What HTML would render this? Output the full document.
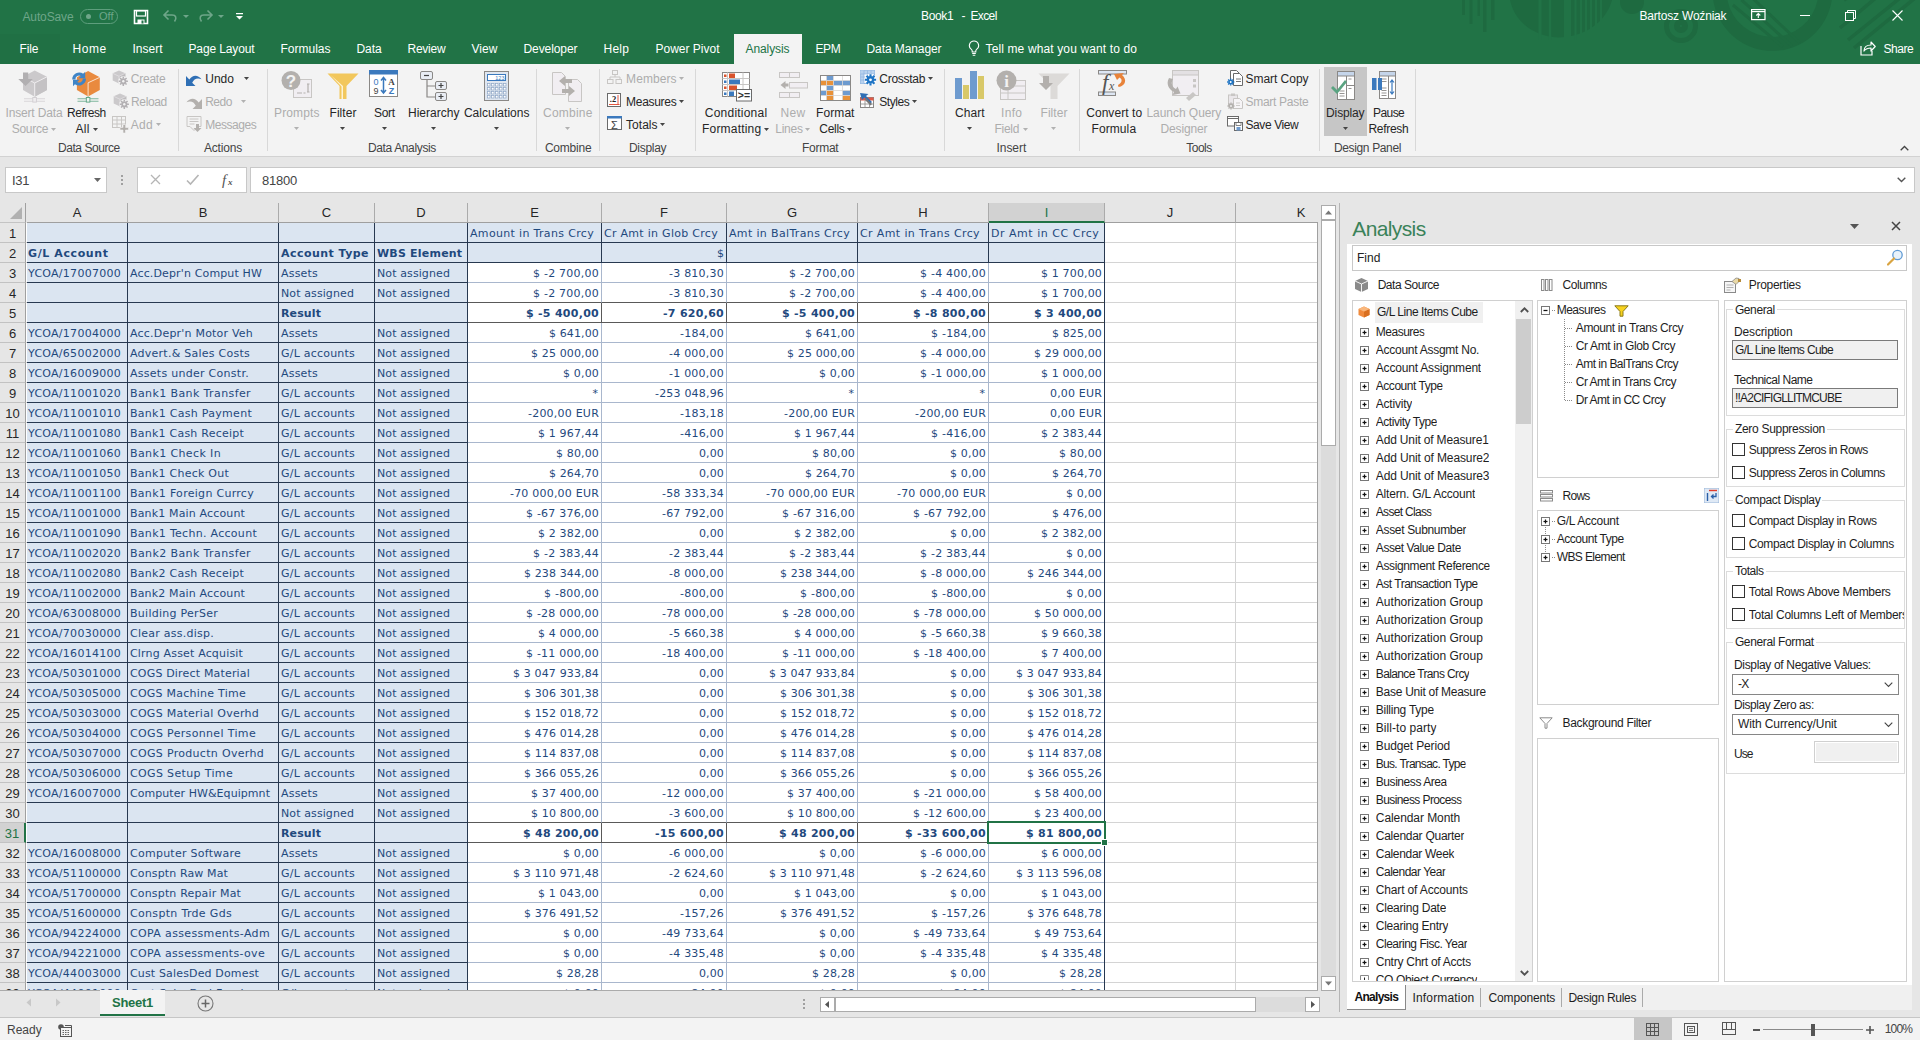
<!DOCTYPE html>
<html lang="en"><head><meta charset="utf-8"><title>Book1 - Excel</title>
<style>

html,body{margin:0;padding:0}
body{width:1920px;height:1040px;overflow:hidden;position:relative;background:#e6e6e6;font-family:"Liberation Sans",sans-serif;font-size:12px;color:#262626}
#greenbg{position:absolute;left:0;top:0;width:1920px;height:64px;background:#217346}


#title{position:absolute;left:0;top:0;width:1920px;height:32px;background:#217346;overflow:visible}
#tabs{position:absolute;left:0;top:32px;width:1920px;height:32px;background:transparent}
#greenbg{position:absolute;left:0;top:0;width:1920px;height:64px;background:#217346}
.t{position:absolute;white-space:nowrap;line-height:16px}
.w{color:#fff}
.dim{color:#6ea689}
.tab{font-size:13px}
#filetab{position:absolute;left:0;top:2px;width:60px;height:30px;background:#207044}
#acttab{position:absolute;left:734px;top:2px;width:68px;height:30px;background:#f3f3f3}
#astoggle{position:absolute;left:80px;top:9px;width:38px;height:15px;box-sizing:border-box;border:1px solid #5e9e7d;border-radius:8px;color:#6ea689;font-size:11px;line-height:13px}
#astoggle i{position:absolute;left:5px;top:4px;width:5px;height:5px;border-radius:3px;background:#6ea689}
#astoggle span{position:absolute;left:18px;top:0}
svg.dd{fill:#444}


#ribbon{position:absolute;left:0;top:64px;width:1920px;height:92px;background:#f3f3f3;border-bottom:1px solid #d2d2d2}
.rc{position:absolute;width:160px;text-align:center;font-size:12px;line-height:16px;color:#262626;white-space:nowrap}
.rl{position:absolute;font-size:12px;line-height:16px;color:#262626;white-space:nowrap}
.dimt{color:#adadad}
.grp{color:#444}
.rsep{position:absolute;top:5px;width:1px;height:82px;background:#d8d8d8}
#dispbtn{position:absolute;left:1324px;top:3px;width:43px;height:69px;background:#c6c6c6}


#fbar{position:absolute;left:0;top:157px;width:1920px;height:46px;background:#e6e6e6}
#namebox{position:absolute;left:5px;top:10px;width:102px;height:26px;box-sizing:border-box;background:#fff;border:1px solid #c8c8c8;font-size:13px;color:#444}
#namebox span{position:absolute;left:6px;top:5px;line-height:16px;letter-spacing:-.3px}
#fdots{position:absolute;left:121px;top:18px;width:3px}
#fdots i{display:block;width:2px;height:2px;background:#a0a0a0;margin-bottom:2px}
#fbtns{position:absolute;left:137px;top:10px;width:110px;height:26px;box-sizing:border-box;background:#fff;border:1px solid #c8c8c8}
#finput{position:absolute;left:250px;top:10px;width:1665px;height:26px;box-sizing:border-box;background:#fff;border:1px solid #c8c8c8;font-size:13px;color:#444}
#finput span{position:absolute;left:11px;top:5px;line-height:16px;letter-spacing:-.2px}
#vscroll{position:absolute;left:1318px;top:203px;width:22px;height:787px;background:#e6e6e6;z-index:20;border-right:1px solid #b5b5b5;box-sizing:border-box}
#vscroll:before{content:"";position:absolute;left:3px;top:17px;width:15px;height:757px;background:#dcdcdc}
.sbtn{position:absolute;left:3px;width:15px;height:15px;background:#fff;border:1px solid #ababab;box-sizing:border-box;overflow:hidden}
.sbtn svg{position:absolute;left:-1px;top:-1px}
#vthumb{position:absolute;left:3px;top:17px;width:15px;height:226px;background:#fff;border:1px solid #ababab;box-sizing:border-box}
#tabbar{position:absolute;left:0;top:990px;width:1340px;height:27px;background:#e6e6e6}
#sheet1{position:absolute;left:100px;top:0;width:65px;height:26px;letter-spacing:-.3px;box-sizing:border-box;background:#f3f3f3;border-bottom:2px solid #217346;color:#217346;font-weight:bold;font-size:13px;text-align:center;line-height:26px}
#hdots{position:absolute;left:803px;top:9px}
#hdots i{display:block;width:2px;height:2px;background:#a0a0a0;margin-bottom:2px}
#hscroll{position:absolute;left:820px;top:7px;width:500px;height:15px;background:#dcdcdc}
.hbtn{position:absolute;top:0;width:15px;height:15px;background:#fff;border:1px solid #ababab;box-sizing:border-box}
#hthumb{position:absolute;left:15px;top:0;width:421px;height:15px;background:#fff;border:1px solid #ababab;box-sizing:border-box}
#status{position:absolute;left:0;top:1017px;width:1920px;height:23px;background:#f3f3f3;border-top:1px solid #c6c6c6;box-sizing:border-box}
#viewsel{position:absolute;left:1634px;top:0;width:38px;height:23px;background:#c6c6c6}


#sheet{position:absolute;left:0;top:203px;width:1318px;height:787px;overflow:hidden;background:#e6e6e6}
#grid{position:absolute;left:26px;top:20px;width:1291px;height:767px;border-right:1px solid #a0a0a0;background-color:#fff;
 background-image:linear-gradient(to bottom,#d4d4d4 1px,transparent 1px);background-size:100% 20px;background-position:0 -1px}
.ch{position:absolute;top:0;height:19px;line-height:20px;text-align:center;font-size:13px;color:#262626;border-right:1px solid #ababab;border-bottom:1px solid #9f9f9f;box-sizing:border-box;height:20px;letter-spacing:0}
.ch.sel{background:#d2d2d2;color:#217346;border-bottom:2px solid #217346;z-index:6}
#grid i{position:absolute;top:0;width:1px;height:100%;background:#d4d4d4}
#iborder{position:absolute;left:1104px;top:20px;width:1px;height:768px;background:#273850;z-index:4}
#corner{position:absolute;left:0;top:0;width:26px;height:20px;box-sizing:border-box;border-right:1px solid #a0a0a0;border-bottom:1px solid #c4c4c4}
#corner:after{content:"";position:absolute;right:3px;bottom:3px;border-left:12px solid transparent;border-bottom:12px solid #b1b1b1}
.rh{position:absolute;left:0;width:26px;height:20px;line-height:22px;text-align:center;font-size:13px;color:#262626;box-sizing:border-box;border-right:1px solid #a0a0a0;border-bottom:1px solid #c2c2c2}
.rh.sel{background:#d2d2d2;color:#217346;border-right:2px solid #217346}
.c{position:absolute;height:20px;box-sizing:border-box;font-family:"DejaVu Sans","Liberation Sans",sans-serif;font-size:11px;color:#1f497d;line-height:19px;white-space:nowrap;overflow:hidden;padding:1px 2px 0 2px;border-right:1px solid;border-bottom:1px solid}
.c.h{background:#dbe5f1;border-color:#273850}
.c.d{background:#fff;border-color:#a9b7cd}
.c.r{text-align:right}
.c.b{font-weight:bold}
.c.res{border-color:#595959}
.c.pre{border-bottom-color:#595959}
.c.last{border-right-color:#273850}
#selbox{position:absolute;box-sizing:border-box;border:2px solid #217346;z-index:5}
#selhandle{position:absolute;width:5px;height:5px;background:#217346;border:1px solid #fff;z-index:6}


#panel{position:absolute;left:1340px;top:203px;width:580px;height:814px;background:#e6e6e6;overflow:hidden}
#pwhite{position:absolute;left:7px;top:41px;width:565px;height:741px;background:#fff}
#ptitle{position:absolute;left:12.3px;top:13px;font-size:21px;line-height:26px;color:#3a8259;letter-spacing:-.62px}
#find{position:absolute;left:12px;top:42px;width:555px;height:26px;box-sizing:border-box;border:1px solid #c8c8c8;background:#fff}
#find span{position:absolute;left:4px;top:4px;font-size:12px;line-height:16px;color:#222}
.pt{position:absolute;font-size:12px;line-height:16px;color:#1e1e1e;white-space:nowrap}
.pm{position:absolute}
.box{position:absolute;box-sizing:border-box;border:1px solid #d0d0d0;background:#fff}
#dsbox{left:12px;top:97px;width:181px;height:682px;overflow:hidden}
#dstrack{position:absolute;right:0;top:0;width:17px;height:100%;background:#f0f0f0}
#dsthumb{position:absolute;right:1px;top:18px;width:15px;height:105px;background:#cdcdcd}
#dshl{position:absolute;left:22px;top:1px;width:108px;height:21px;background:#f0f0f0}
#colbox{left:197px;top:97px;width:182px;height:178px}
#rowbox{left:197px;top:307px;width:182px;height:195px}
#bfbox{left:197px;top:535px;width:182px;height:244px}
#propbox{left:384px;top:97px;width:183px;height:682px}
.dots.h{position:absolute;height:1px;background-image:linear-gradient(to right,#8a8a8a 1px,transparent 1px);background-size:2px 1px}
.dots.v{position:absolute;width:1px;background-image:linear-gradient(to bottom,#8a8a8a 1px,transparent 1px);background-size:1px 2px}
.frame{position:absolute;left:386px;width:179px;box-sizing:border-box;border:1px solid #dcdcdc}
.legend{position:absolute;left:392.9px;height:16px;background:#fff;font-size:12px;line-height:16px;color:#1e1e1e;padding-left:2px;white-space:nowrap;box-sizing:border-box}
.chk{position:absolute;width:13px;height:13px;box-sizing:border-box;border:1px solid #333;background:#fff}
.tb{position:absolute;left:392px;width:166px;height:20px;box-sizing:border-box;border:1px solid #7a7a7a;background:#f0f0f0;font-size:12px;line-height:18px;color:#1e1e1e;white-space:nowrap;overflow:hidden}
.tb span{position:absolute;left:2px;top:0}
.psel{position:absolute;left:392px;width:167px;height:21px;box-sizing:border-box;border:1px solid #868686;background:#fff;font-size:12px;line-height:19px;color:#1e1e1e}
.psel span{position:absolute;left:5px;top:0;white-space:nowrap}
.psel svg{position:absolute;right:5px;top:7px}
#usebox{position:absolute;left:474px;top:538px;width:85px;height:22px;box-sizing:border-box;border:1px solid #d0d0d0;background:#f0f0f0;box-shadow:inset 0 0 0 1px #fff}
#propclip{position:absolute;left:565px;top:300px;width:2px;height:200px;background:#fff;border-right:1px solid #d0d0d0;box-sizing:border-box;display:none}
#ptabs{position:absolute;left:7px;top:782px;width:565px;height:25px;background:#f0f0f0}
#ptact{position:absolute;left:0;top:0;width:59px;height:25px;box-sizing:border-box;background:#fff;border-right:1px solid #888;border-bottom:1px solid #888;font-weight:bold;font-size:12px;line-height:25px;color:#111}
#ptact span{position:absolute;left:7.500px;top:0}
.ptab{position:absolute;top:5px;font-size:12px;line-height:16px;color:#1e1e1e;white-space:nowrap}
.ptsep{position:absolute;top:3px;width:1px;height:19px;background:#aaa}

</style></head><body>
<div id="greenbg"></div>
<div id="title">
<svg id="deco" width="480" height="64" viewBox="0 0 480 64" style="position:absolute;left:1440px;top:0">
<g fill="#1e6a40">
<rect x="22" y="0" width="3" height="15"/><rect x="29.500" y="0" width="3" height="24"/><rect x="37.500" y="0" width="2.500" height="16"/><rect x="43" y="0" width="3.500" height="32"/><rect x="51" y="0" width="3.500" height="20"/>
<path d="M70 0 C74 20 92 36 118 37.500 C145 37 166 22 172 0 Z"/>
<circle cx="192" cy="2" r="12"/>
<path d="M273.200 0 A60 60 0 0 0 391.800 0 L377.600 0 A46 46 0 0 1 287.400 0 Z" transform="translate(0,0)"/>
</g>
<g stroke="#217346" fill="none">
<path d="M100 0v40" stroke-width="3"/><path d="M110 0v40" stroke-width="2.500"/><path d="M127.500 0v40" stroke-width="7"/><path d="M135.500 0v40M141 0v40M146 0v40M151 0v40M156 0v40M161 0v40" stroke-width="2"/>
</g>
<g fill="none" stroke="#1e6a40">
<circle cx="241" cy="26" r="14.500" stroke-width="5"/>
<circle cx="241" cy="26" r="4" stroke-width="6"/>
<path d="M290 20 L352 40 M296 12 L360 36 M300 4 L366 30" stroke-width="3" transform="rotate(22 330 20)"/>
<path d="M404 0 L436 -20 M408 40 L470 -10 M414 48 L480 -6 M400 28 L450 -14" stroke-width="3.500"/>
</g>
</svg>
<div class="t dim" style="left:22.5px;top:9px;font-size:12px;letter-spacing:-0.138px;">AutoSave</div>
<div id="astoggle"><i></i><span>Off</span></div>
<svg style="position:absolute;left:133px;top:9px" width="16" height="16" viewBox="0 0 16 16"><path d="M1.5 1.5h13v13h-13z" fill="none" stroke="#fff" stroke-width="1.6"/><rect x="3.5" y="2" width="9" height="5" fill="#217346" stroke="#fff" stroke-width="1.2"/><rect x="4.5" y="10.5" width="7" height="4" fill="#fff"/><rect x="8.5" y="11.5" width="2" height="3" fill="#217346"/></svg>
<svg style="position:absolute;left:162px;top:9px" width="18" height="15" viewBox="0 0 18 15"><path d="M6.5 1.5 L2 6 L6.5 10.5 M2 6 H10 C14 6 15 9 12.5 12.5" fill="none" stroke="#6ea689" stroke-width="1.6"/></svg>
<svg style="position:absolute;left:183px;top:15px" width="6" height="3" viewBox="0 0 6 3"><path d="M0 0h6L3 3z" fill="#6ea689"/></svg>
<svg style="position:absolute;left:196px;top:9px" width="18" height="15" viewBox="0 0 18 15"><path d="M11.5 1.5 L16 6 L11.5 10.5 M16 6 H8 C4 6 3 9 5.5 12.5" fill="none" stroke="#6ea689" stroke-width="1.6"/></svg>
<svg style="position:absolute;left:218px;top:15px" width="6" height="3" viewBox="0 0 6 3"><path d="M0 0h6L3 3z" fill="#6ea689"/></svg>
<svg style="position:absolute;left:236px;top:13px" width="7" height="7" viewBox="0 0 7 7"><path d="M0 0h7v1.2H0zM0 3h7L3.5 6.5z" fill="#fff"/></svg>
<div class="t w" style="left:921.0px;top:8px;font-size:12px;letter-spacing:-0.339px;">Book1</div>
<div class="t w" style="left:961.5px;top:8px;font-size:12px;letter-spacing:0.0px;">-</div>
<div class="t w" style="left:970.5px;top:8px;font-size:12px;letter-spacing:-0.632px;">Excel</div>
<div class="t w" style="left:1639.5px;top:8px;font-size:12px;letter-spacing:-0.194px;">Bartosz Woźniak</div>
<svg style="position:absolute;left:1751px;top:9px" width="15" height="12" viewBox="0 0 15 12"><rect x=".6" y=".6" width="13.4" height="10" fill="none" stroke="#fff" stroke-width="1.2"/><path d="M.6 2.6h13.4" stroke="#fff" stroke-width="1.2"/><path d="M7.3 9V5M5.3 6.5l2-2 2 2" stroke="#fff" fill="none" stroke-width="1.1"/></svg>
<div style="position:absolute;left:1800px;top:15px;width:10px;height:1px;background:#fff"></div>
<svg style="position:absolute;left:1845px;top:10px" width="11" height="11" viewBox="0 0 11 11"><rect x=".5" y="2.5" width="8" height="8" fill="none" stroke="#fff"/><path d="M2.5 2.5v-2h8v8h-2" fill="none" stroke="#fff"/></svg>
<svg style="position:absolute;left:1892px;top:10px" width="11" height="11" viewBox="0 0 11 11"><path d="M.5.5l10 10M10.500.5l-10 10" stroke="#fff" stroke-width="1.1"/></svg>
</div>
<div id="tabs">
<div id="filetab"></div><div id="acttab"></div>
<div class="t w" style="left:19.5px;top:9px;font-size:12px;letter-spacing:-0.096px;">File</div>
<div class="t w" style="left:72.5px;top:9px;font-size:12px;letter-spacing:0.569px;">Home</div>
<div class="t w" style="left:132.5px;top:9px;font-size:12px;letter-spacing:-0.002px;">Insert</div>
<div class="t w" style="left:188.5px;top:9px;font-size:12px;letter-spacing:-0.132px;">Page Layout</div>
<div class="t w" style="left:280.5px;top:9px;font-size:12px;letter-spacing:-0.001px;">Formulas</div>
<div class="t w" style="left:356.5px;top:9px;font-size:12px;letter-spacing:-0.099px;">Data</div>
<div class="t w" style="left:407.5px;top:9px;font-size:12px;letter-spacing:-0.245px;">Review</div>
<div class="t w" style="left:471.5px;top:9px;font-size:12px;letter-spacing:0.059px;">View</div>
<div class="t w" style="left:523.5px;top:9px;font-size:12px;letter-spacing:-0.082px;">Developer</div>
<div class="t w" style="left:603.5px;top:9px;font-size:12px;letter-spacing:0.234px;">Help</div>
<div class="t w" style="left:655.5px;top:9px;font-size:12px;letter-spacing:-0.002px;">Power Pivot</div>
<div class="t w" style="left:815.5px;top:9px;font-size:12px;letter-spacing:-0.402px;">EPM</div>
<div class="t w" style="left:866.5px;top:9px;font-size:12px;letter-spacing:-0.091px;">Data Manager</div>
<div class="t " style="left:745.5px;top:9px;font-size:12px;letter-spacing:-0.091px;color:#217346">Analysis</div>
<svg style="position:absolute;left:968px;top:8px" width="12" height="17" viewBox="0 0 12 17"><path d="M6 1a4.6 4.6 0 0 0-2.6 8.400c.5.400.8 1 .8 1.600V12h3.600v-1c0-.6.300-1.200.8-1.600A4.600 4.600 0 0 0 6 1z" fill="none" stroke="#fff" stroke-width="1.100"/><path d="M4.200 13.500h3.600M4.700 15.200h2.600" stroke="#fff" stroke-width="1.100"/></svg>
<div class="t w" style="left:985.5px;top:9px;font-size:12px;letter-spacing:0.129px;">Tell me what you want to do</div>
<svg style="position:absolute;left:1860px;top:8px" width="16" height="16" viewBox="0 0 16 16"><path d="M1 6v9h11v-4" fill="none" stroke="#fff" stroke-width="1.2"/><path d="M4 11c0-4 3-6 7-6V2l4.200 4.500L11 11V8c-3 0-5 .5-7 3z" fill="none" stroke="#fff" stroke-width="1.200" stroke-linejoin="round"/></svg>
<div class="t w" style="left:1883.5px;top:9px;font-size:12px;letter-spacing:-0.449px;">Share</div>
</div>
<div id="ribbon">
<svg style="position:absolute;left:17px;top:6px" width="32" height="34" viewBox="0 0 32 34"><path d="M17.700 .5L30 6.800V20.100L17.700 26.800 6 20.100V6.800Z" fill="#cbc9cb"/><path d="M17.700 13L30 6.800V20.100L17.700 26.800Z" fill="#c4c2c4"/><path d="M17.700 13V26.800M17.700 13L30 6.800M17.700 13L12 10" stroke="#efedef" stroke-width="1" fill="none"/><path d="M6 2.500h5.200v6.500h4.600L8.500 16 1.300 9H6z" fill="#b1afb1"/><path d="M17.700 26.800v2" stroke="#cbc9cb" stroke-width="1.200"/><path d="M7 28.800h21M7 31.200h21" stroke="#d9d6d9" stroke-width="1.100"/><rect x="15.800" y="27.500" width="3.600" height="4.600" fill="#efedef" stroke="#d0cdd0" stroke-width=".9"/></svg>
<div class="rl dimt" style="left:5.5px;top:41px;letter-spacing:-0.161px">Insert Data</div>
<div class="rl dimt" style="left:11.7px;top:57px;letter-spacing:-0.259px">Source</div>
<svg style="position:absolute;left:51px;top:64px" width="5" height="3" viewBox="0 0 5 3"><path d="M0 0h5L2.500 3z" fill="#b1b1b1"/></svg>
<svg style="position:absolute;left:70px;top:6px" width="32" height="34" viewBox="0 0 32 34"><path d="M18.100 1L29.800 7.300V20L18.100 26.500 6.900 20V7.300Z" fill="#e98a3e"/><path d="M18.100 12.800V26.500M18.100 12.800L29.800 7.300" stroke="#fbe3cf" stroke-width="1" fill="none"/><path d="M2.200 9.500A7 7 0 0 1 13.300 3.800L15.200 1.800V8.300H8.700L10.900 6A3.700 3.700 0 0 0 5.400 9.500Z" fill="#3f84c6"/><path d="M16 8.500A7 7 0 0 1 4.900 14.200L3 16.200V9.700h6.500L7.300 12A3.700 3.700 0 0 0 12.800 8.500Z" fill="#3f84c6"/><path d="M18.100 26.500v2" stroke="#5aa381" stroke-width="1.200"/><path d="M7.500 28.800h21M7.500 31.200h21" stroke="#7fb69d" stroke-width="1.100"/><rect x="16.300" y="27.500" width="3.600" height="4.600" fill="#eef6f1" stroke="#5aa381" stroke-width=".9"/></svg>
<div class="rl " style="left:67.0px;top:41px;letter-spacing:-0.48px">Refresh</div>
<div class="rl " style="left:75.5px;top:57px;letter-spacing:0.266px">All</div>
<svg style="position:absolute;left:93px;top:64px" width="5" height="3" viewBox="0 0 5 3"><path d="M0 0h5L2.500 3z" fill="#444"/></svg>
<svg style="position:absolute;left:112px;top:6px" width="17" height="17" viewBox="0 0 17 17"><path d="M7 .5l6.300 2.800v7.200L7 13.500.7 10.500V3.300z" fill="#cbc9cb"/><path d="M7 6.300l6.300-3v7.200L7 13.500z" fill="#bdbbbd"/><path d="M7 6.300V13.500M7 6.300L.7 3.300M7 6.300l6.300-3" stroke="#e6e4e6" stroke-width=".7" fill="none"/><circle cx="11.300" cy="11.300" r="5" fill="#f3f3f3"/><circle cx="11.3" cy="11.3" r="3.1" fill="#b3b0b3"/><path d="M14.10 11.30L15.90 11.30M13.28 13.28L14.55 14.55M11.30 14.10L11.30 15.90M9.32 13.28L8.05 14.55M8.50 11.30L6.70 11.30M9.32 9.32L8.05 8.05M11.30 8.50L11.30 6.70M13.28 9.32L14.55 8.05" stroke="#b3b0b3" stroke-width="1.5"/><circle cx="11.3" cy="11.3" r="1.18" fill="#f3f3f3"/></svg>
<div class="rl dimt" style="left:130.8px;top:7px;letter-spacing:-0.24px">Create</div>
<svg style="position:absolute;left:113px;top:29px" width="17" height="17" viewBox="0 0 17 17"><path d="M7 .5l6.300 2.800v7.200L7 13.500.7 10.500V3.300z" fill="#cbc9cb"/><path d="M7 6.300l6.300-3v7.200L7 13.500z" fill="#bdbbbd"/><path d="M7 6.300V13.500M7 6.300L.7 3.300M7 6.300l6.300-3" stroke="#e6e4e6" stroke-width=".7" fill="none"/><circle cx="11.300" cy="11.300" r="5" fill="#f3f3f3"/><circle cx="11.3" cy="11.3" r="3.1" fill="#b3b0b3"/><path d="M14.10 11.30L15.90 11.30M13.28 13.28L14.55 14.55M11.30 14.10L11.30 15.90M9.32 13.28L8.05 14.55M8.50 11.30L6.70 11.30M9.32 9.32L8.05 8.05M11.30 8.50L11.30 6.70M13.28 9.32L14.55 8.05" stroke="#b3b0b3" stroke-width="1.5"/><circle cx="11.3" cy="11.3" r="1.18" fill="#f3f3f3"/></svg>
<div class="rl dimt" style="left:131.0px;top:30px;letter-spacing:-0.35px">Reload</div>
<svg style="position:absolute;left:112px;top:52px" width="17" height="18" viewBox="0 0 17 18"><rect x=".5" y=".5" width="13" height="11" fill="#f3f3f3" stroke="#c8c6c4"/><path d="M.5 4h13M.5 8h13M5 .5v11M9.500 .5v11" stroke="#c8c6c4"/><path d="M8 11.500h3v-3h2.500v3h3v2.500h-3v3H11v-3H8z" fill="#b3b0ad" stroke="#f3f3f3" stroke-width=".6"/></svg>
<div class="rl dimt" style="left:130.8px;top:53px;letter-spacing:0.259px">Add</div>
<svg style="position:absolute;left:156px;top:59px" width="5" height="3" viewBox="0 0 5 3"><path d="M0 0h5L2.500 3z" fill="#b1b1b1"/></svg>
<div class="rl grp" style="left:58.0px;top:76px;letter-spacing:-0.457px">Data Source</div>
<div class="rsep" style="left:178px"></div>
<svg style="position:absolute;left:185px;top:8px" width="17" height="16" viewBox="0 0 17 16"><path d="M1 4v10h9.500L7.200 10.800C9 6.500 12.500 5.500 16.500 7.200 13 2.500 7.500 2.500 4.300 7.500z" fill="#2f6fb5"/></svg>
<div class="rl " style="left:205.2px;top:7px;letter-spacing:0.032px">Undo</div>
<svg style="position:absolute;left:244px;top:13px" width="5" height="3" viewBox="0 0 5 3"><path d="M0 0h5L2.500 3z" fill="#444"/></svg>
<svg style="position:absolute;left:186px;top:30px" width="17" height="16" viewBox="0 0 17 16"><path d="M16 5v10H6.500l3.300-3.200C8 7.500 4.500 6.500.5 8.200 4 3.500 9.500 3.500 12.700 8.500z" fill="#b3b0ad"/></svg>
<div class="rl dimt" style="left:205.2px;top:30px;letter-spacing:-0.511px">Redo</div>
<svg style="position:absolute;left:241px;top:36px" width="5" height="3" viewBox="0 0 5 3"><path d="M0 0h5L2.500 3z" fill="#b1b1b1"/></svg>
<svg style="position:absolute;left:186px;top:52px" width="17" height="17" viewBox="0 0 17 17"><path d="M1 .5h14v10l-3 0-4 4-4-4-3 0z" fill="#f3f3f3" stroke="#c8c6c4"/><path d="M3.500 3h9M3.500 5.500h9M3.500 8h5" stroke="#c8c6c4"/><path d="M10 8h3v4h2.500l-4 4-4-4H10z" fill="#b3b0ad"/></svg>
<div class="rl dimt" style="left:205.2px;top:53px;letter-spacing:-0.452px">Messages</div>
<div class="rl grp" style="left:203.9px;top:76px;letter-spacing:-0.162px">Actions</div>
<div class="rsep" style="left:267px"></div>
<svg style="position:absolute;left:281px;top:6px" width="32" height="30" viewBox="0 0 32 30"><rect x="12.500" y="9.500" width="18" height="18" fill="#f1eef2" stroke="#c8c6c4"/><path d="M16 23h5M22.500 23h2M27 14v8M26 14h2.500M26 22h2.500" stroke="#b3b0ad" stroke-width="1.200"/><circle cx="10" cy="10.500" r="9.500" fill="#b3b0ad"/><text x="10" y="16.500" font-family="Liberation Sans,sans-serif" font-weight="bold" font-size="17" fill="#f3f3f3" text-anchor="middle">?</text></svg>
<div class="rl dimt" style="left:274.1px;top:41px;letter-spacing:0.111px">Prompts</div>
<svg style="position:absolute;left:294px;top:63px" width="5" height="3" viewBox="0 0 5 3"><path d="M0 0h5L2.500 3z" fill="#b1b1b1"/></svg>
<svg style="position:absolute;left:327px;top:6px" width="32" height="30" viewBox="0 0 32 30"><path d="M.5 3.500h31L19.500 16v13h-7V16z" fill="#f2c75c"/><path d="M3.500 5l11 11.500V29h1.500V16z" fill="#fdf3d5"/></svg>
<div class="rl " style="left:329.5px;top:41px;letter-spacing:0.061px">Filter</div>
<svg style="position:absolute;left:340px;top:63px" width="5" height="3" viewBox="0 0 5 3"><path d="M0 0h5L2.500 3z" fill="#444"/></svg>
<svg style="position:absolute;left:369px;top:6px" width="29" height="27" viewBox="0 0 29 27"><rect x=".5" y=".5" width="28" height="26" fill="#fff" stroke="#8a8886"/><rect x="0" y="0" width="29" height="4.500" fill="#3b79bd"/><text x="7" y="14.500" font-family="Liberation Sans,sans-serif" font-size="9" fill="#3b79bd" text-anchor="middle">0</text><text x="7" y="24" font-family="Liberation Sans,sans-serif" font-size="9" fill="#444" text-anchor="middle">9</text><text x="22.500" y="14.500" font-family="Liberation Serif,serif" font-weight="bold" font-size="9" fill="#444" text-anchor="middle">A</text><text x="22.500" y="24" font-family="Liberation Sans,sans-serif" font-weight="bold" font-size="9" fill="#3b79bd" text-anchor="middle">Z</text><path d="M14.500 8v14M12 10.500l2.500-3 2.500 3M12 20l2.500 3 2.500-3" stroke="#3b79bd" stroke-width="1.500" fill="none"/></svg>
<div class="rl " style="left:373.9px;top:41px;letter-spacing:-0.231px">Sort</div>
<svg style="position:absolute;left:382px;top:63px" width="5" height="3" viewBox="0 0 5 3"><path d="M0 0h5L2.500 3z" fill="#444"/></svg>
<svg style="position:absolute;left:420px;top:6px" width="28" height="32" viewBox="0 0 28 32"><path d="M7 9v18h10M7 16h10" fill="none" stroke="#8a8886" stroke-width="1.200"/><rect x=".5" y="1.500" width="12" height="8" rx="1.500" fill="#e9edf4" stroke="#8a8886"/><path d="M4 5.500h5" stroke="#444" stroke-width="1.200"/><rect x="15.500" y="11.500" width="11" height="8" rx="1.500" fill="#e9edf4" stroke="#8a8886"/><path d="M18.500 15.500h5M21 13v5" stroke="#444" stroke-width="1.200"/><rect x="15.500" y="22.500" width="11" height="8" rx="1.500" fill="#e9edf4" stroke="#8a8886"/><path d="M18.500 26.500h5M21 24v5" stroke="#444" stroke-width="1.200"/></svg>
<div class="rl " style="left:408.0px;top:41px;letter-spacing:0.018px">Hierarchy</div>
<svg style="position:absolute;left:431px;top:63px" width="5" height="3" viewBox="0 0 5 3"><path d="M0 0h5L2.500 3z" fill="#444"/></svg>
<svg style="position:absolute;left:484px;top:7px" width="25" height="30" viewBox="0 0 25 30"><rect x=".5" y=".5" width="24" height="29" fill="#dfe6f0" stroke="#8a8886"/><rect x="3.500" y="3.500" width="18" height="6" fill="#fff" stroke="#3b79bd"/><text x="20.500" y="9" font-family="Liberation Sans,sans-serif" font-size="5.500" fill="#3b79bd" text-anchor="end">123</text><rect x="3.5" y="12.5" width="2.500" height="2.500" fill="#fff" stroke="#8fa6c6" stroke-width=".7"/><rect x="3.5" y="16.5" width="2.500" height="2.500" fill="#fff" stroke="#8fa6c6" stroke-width=".7"/><rect x="3.5" y="20.5" width="2.500" height="2.500" fill="#fff" stroke="#8fa6c6" stroke-width=".7"/><rect x="3.5" y="24.5" width="2.500" height="2.500" fill="#fff" stroke="#8fa6c6" stroke-width=".7"/><rect x="7.5" y="12.5" width="2.500" height="2.500" fill="#fff" stroke="#8fa6c6" stroke-width=".7"/><rect x="7.5" y="16.5" width="2.500" height="2.500" fill="#fff" stroke="#8fa6c6" stroke-width=".7"/><rect x="7.5" y="20.5" width="2.500" height="2.500" fill="#fff" stroke="#8fa6c6" stroke-width=".7"/><rect x="7.5" y="24.5" width="2.500" height="2.500" fill="#fff" stroke="#8fa6c6" stroke-width=".7"/><rect x="11.5" y="12.5" width="2.500" height="2.500" fill="#fff" stroke="#8fa6c6" stroke-width=".7"/><rect x="11.5" y="16.5" width="2.500" height="2.500" fill="#fff" stroke="#8fa6c6" stroke-width=".7"/><rect x="11.5" y="20.5" width="2.500" height="2.500" fill="#fff" stroke="#8fa6c6" stroke-width=".7"/><rect x="11.5" y="24.5" width="2.500" height="2.500" fill="#fff" stroke="#8fa6c6" stroke-width=".7"/><rect x="15.5" y="12.5" width="2.500" height="2.500" fill="#fff" stroke="#8fa6c6" stroke-width=".7"/><rect x="15.5" y="16.5" width="2.500" height="2.500" fill="#fff" stroke="#8fa6c6" stroke-width=".7"/><rect x="15.5" y="20.5" width="2.500" height="2.500" fill="#fff" stroke="#8fa6c6" stroke-width=".7"/><rect x="15.5" y="24.5" width="2.500" height="2.500" fill="#fff" stroke="#8fa6c6" stroke-width=".7"/><rect x="19.5" y="12.5" width="2.500" height="2.500" fill="#fff" stroke="#8fa6c6" stroke-width=".7"/><rect x="19.5" y="16.5" width="2.500" height="2.500" fill="#fff" stroke="#8fa6c6" stroke-width=".7"/><rect x="19.5" y="20.5" width="2.500" height="2.500" fill="#fff" stroke="#8fa6c6" stroke-width=".7"/><rect x="19.5" y="24.5" width="2.500" height="2.500" fill="#fff" stroke="#8fa6c6" stroke-width=".7"/></svg>
<div class="rl " style="left:463.9px;top:41px;letter-spacing:0.02px">Calculations</div>
<svg style="position:absolute;left:494px;top:63px" width="5" height="3" viewBox="0 0 5 3"><path d="M0 0h5L2.500 3z" fill="#444"/></svg>
<div class="rl grp" style="left:367.9px;top:76px;letter-spacing:-0.352px">Data Analysis</div>
<div class="rsep" style="left:536px"></div>
<svg style="position:absolute;left:551px;top:7px" width="33" height="32" viewBox="0 0 33 32"><path d="M1.500 1.500h9l4 4v18h-13z" fill="#f1eef2" stroke="#c8c6c4"/><path d="M17.500 8.500h9l4 4v18h-13z" fill="#f1eef2" stroke="#c8c6c4"/><path d="M8 10l6-5v3h7v4h-7v3z" fill="#b3b0ad"/><path d="M24 20l-6 5v-3h-7v-4h7v-3z" fill="#b3b0ad"/></svg>
<div class="rl dimt" style="left:543.0px;top:41px;letter-spacing:0.227px">Combine</div>
<svg style="position:absolute;left:565px;top:63px" width="5" height="3" viewBox="0 0 5 3"><path d="M0 0h5L2.500 3z" fill="#b1b1b1"/></svg>
<div class="rl grp" style="left:544.9px;top:76px;letter-spacing:-0.219px">Combine</div>
<div class="rsep" style="left:599px"></div>
<svg style="position:absolute;left:607px;top:6px" width="15" height="14" viewBox="0 0 15 14"><g fill="#f3f3f3" stroke="#c8c6c4"><rect x="5.500" y=".5" width="5" height="4"/><rect x=".5" y="9.500" width="5.500" height="4"/><rect x="9" y="9.500" width="5.500" height="4"/></g><path d="M8 4.500v2.500M3 9.500V7h10v2.500" fill="none" stroke="#c8c6c4"/></svg>
<div class="rl dimt" style="left:626.1px;top:7px;letter-spacing:0.06px">Members</div>
<svg style="position:absolute;left:679px;top:13px" width="5" height="3" viewBox="0 0 5 3"><path d="M0 0h5L2.500 3z" fill="#b1b1b1"/></svg>
<svg style="position:absolute;left:607px;top:29px" width="14" height="14" viewBox="0 0 14 14"><rect x=".5" y=".5" width="13" height="13" fill="#fff" stroke="#6a6a6a"/><text x="6" y="9" font-family="Liberation Serif,serif" font-weight="bold" font-size="8.500" fill="#222" text-anchor="middle">.2</text><path d="M2 11.500h10.500M11 2v9.500" stroke="#e0452c" stroke-width=".9"/></svg>
<div class="rl " style="left:626.1px;top:30px;letter-spacing:-0.305px">Measures</div>
<svg style="position:absolute;left:679px;top:36px" width="5" height="3" viewBox="0 0 5 3"><path d="M0 0h5L2.500 3z" fill="#444"/></svg>
<svg style="position:absolute;left:607px;top:52px" width="15" height="14" viewBox="0 0 15 14"><rect x=".5" y=".5" width="14" height="13" fill="#fff" stroke="#6a6a6a"/><rect x="0" y="0" width="15" height="2.500" fill="#3b79bd"/><text x="7.500" y="12.500" font-family="Liberation Sans,sans-serif" font-size="11" fill="#444" text-anchor="middle">Σ</text></svg>
<div class="rl " style="left:626.1px;top:53px;letter-spacing:0.009px">Totals</div>
<svg style="position:absolute;left:660px;top:59px" width="5" height="3" viewBox="0 0 5 3"><path d="M0 0h5L2.500 3z" fill="#444"/></svg>
<div class="rl grp" style="left:628.9px;top:76px;letter-spacing:-0.269px">Display</div>
<div class="rsep" style="left:695px"></div>
<svg style="position:absolute;left:722px;top:8px" width="31" height="30" viewBox="0 0 31 30"><rect x=".5" y=".5" width="27" height="24" fill="#fff" stroke="#8a8886"/><path d="M.5 6.500h27M.5 12.500h27M.5 18.500h27M5.500 .5v24M21 .5v24" stroke="#c8c6c4"/><rect x="2" y="2.500" width="2.500" height="2.500" fill="#d9532c"/><rect x="2" y="8.500" width="2.500" height="2.500" fill="#3b79bd"/><rect x="2" y="14.500" width="2.500" height="2.500" fill="#d9532c"/><rect x="2" y="20.500" width="2.500" height="2.500" fill="#3b79bd"/><rect x="7" y="1.500" width="6" height="4.500" fill="#d9532c"/><rect x="7" y="7.500" width="11" height="4.500" fill="#3b79bd"/><rect x="7" y="13.500" width="8" height="4.500" fill="#d9532c"/><rect x="7" y="19.500" width="5" height="4.500" fill="#3b79bd"/><rect x="14.500" y="17.500" width="15" height="11.500" fill="#fff" stroke="#6a6a6a"/><text x="22" y="27" font-family="Liberation Sans,sans-serif" font-weight="bold" font-size="10.500" fill="#333" text-anchor="middle">&gt;=</text></svg>
<div class="rl " style="left:704.8px;top:41px;letter-spacing:0.225px">Conditional</div>
<div class="rl " style="left:702.0px;top:57px;letter-spacing:0.195px">Formatting</div>
<svg style="position:absolute;left:764px;top:64px" width="5" height="3" viewBox="0 0 5 3"><path d="M0 0h5L2.500 3z" fill="#444"/></svg>
<svg style="position:absolute;left:779px;top:8px" width="30" height="27" viewBox="0 0 30 27"><g fill="#f1eef2" stroke="#c8c6c4"><rect x=".5" y=".5" width="10" height="5"/><rect x="10.500" y=".5" width="10" height="5"/><rect x="10.500" y="10.500" width="18" height="5.500"/><rect x=".5" y="20.500" width="10" height="5"/><rect x="10.500" y="20.500" width="10" height="5"/></g><path d="M1.500 13l5-4v2.500h3v3h-3V17z" fill="#b3b0ad"/></svg>
<div class="rl dimt" style="left:780.5px;top:41px;letter-spacing:0.318px">New</div>
<div class="rl dimt" style="left:775.2px;top:57px;letter-spacing:-0.219px">Lines</div>
<svg style="position:absolute;left:805px;top:64px" width="5" height="3" viewBox="0 0 5 3"><path d="M0 0h5L2.500 3z" fill="#b1b1b1"/></svg>
<svg style="position:absolute;left:820px;top:11px" width="31" height="26" viewBox="0 0 31 26"><rect x=".5" y=".5" width="30" height="25" fill="#fff" stroke="#8a8886"/><rect x="0.5" y="5.5" width="6" height="5" fill="#e8923a"/><rect x="6.5" y="5.5" width="7" height="5" fill="#e8923a"/><rect x="6.5" y="0.5" width="7" height="5" fill="#6e9bcf"/><rect x="13.5" y="5.5" width="9" height="5" fill="#6e9bcf"/><rect x="22.5" y="5.5" width="8" height="5" fill="#6e9bcf"/><rect x="6.5" y="10.5" width="7" height="5" fill="#6e9bcf"/><rect x="0.5" y="15.5" width="6" height="5" fill="#6e9bcf"/><rect x="6.5" y="15.5" width="7" height="5" fill="#e8923a"/><rect x="22.5" y="15.5" width="8" height="5" fill="#6e9bcf"/><rect x="6.5" y="20.5" width="7" height="5" fill="#e8923a"/><rect x="22.5" y="20.5" width="8" height="5" fill="#e8923a"/><rect x="13.5" y="0.5" width="9" height="5" fill="#fff"/><path d="M.5 5.500h30M.5 10.500h30M.5 15.500h30M.5 20.500h30M6.500 .5v25M13.500 .5v25M22.500 .5v25" stroke="#d8d6d4" stroke-width=".8"/><rect x=".5" y=".5" width="30" height="25" fill="none" stroke="#8a8886"/></svg>
<div class="rl " style="left:816.1px;top:41px;letter-spacing:0.072px">Format</div>
<div class="rl " style="left:819.3px;top:57px;letter-spacing:-0.283px">Cells</div>
<svg style="position:absolute;left:847px;top:64px" width="5" height="3" viewBox="0 0 5 3"><path d="M0 0h5L2.500 3z" fill="#444"/></svg>
<svg style="position:absolute;left:860px;top:6px" width="17" height="17" viewBox="0 0 17 17"><rect x=".5" y=".5" width="14" height="13" fill="#fff" stroke="#8fb4e0"/><rect x=".5" y=".5" width="14" height="3.500" fill="#b8d2ee"/><rect x=".5" y=".5" width="3.500" height="13" fill="#b8d2ee"/><path d="M4 .5v13M7.500 .5v13M11 .5v13M.5 4h14M.5 7h14M.5 10h14" stroke="#8fb4e0" stroke-width=".7"/><circle cx="10.500" cy="9.800" r="6" fill="#fff" opacity=".85"/><circle cx="10.5" cy="9.8" r="3.7" fill="#1e74c4"/><path d="M13.90 9.80L16.10 9.80M12.90 12.20L14.46 13.76M10.50 13.20L10.50 15.40M8.10 12.20L6.54 13.76M7.10 9.80L4.90 9.80M8.10 7.40L6.54 5.84M10.50 6.40L10.50 4.20M12.90 7.40L14.46 5.84" stroke="#1e74c4" stroke-width="2.1"/><circle cx="10.5" cy="9.8" r="1.41" fill="#fff"/></svg>
<div class="rl " style="left:879.3px;top:7px;letter-spacing:-0.269px">Crosstab</div>
<svg style="position:absolute;left:928px;top:13px" width="5" height="3" viewBox="0 0 5 3"><path d="M0 0h5L2.500 3z" fill="#444"/></svg>
<svg style="position:absolute;left:860px;top:29px" width="15" height="15" viewBox="0 0 15 15"><rect x=".5" y="4.500" width="13" height="10" fill="#fff" stroke="#8a8886"/><rect x=".5" y="4.500" width="13" height="3" fill="#e05a47"/><path d="M.5 11h13M5 7.500v7M9.500 7.500v7" stroke="#8a8886" stroke-width=".8"/><path d="M0 0l2 7 2.500-2.500 6 6 1.500-1.500-6-6L8.500 1z" fill="#2f6fb5"/><path d="M6 5l6 6-1.500 1.500-6-6z" fill="#777"/></svg>
<div class="rl " style="left:879.3px;top:30px;letter-spacing:-0.451px">Styles</div>
<svg style="position:absolute;left:912px;top:36px" width="5" height="3" viewBox="0 0 5 3"><path d="M0 0h5L2.500 3z" fill="#444"/></svg>
<div class="rl grp" style="left:802.0px;top:76px;letter-spacing:-0.273px">Format</div>
<div class="rsep" style="left:944px"></div>
<svg style="position:absolute;left:955px;top:6px" width="29" height="30" viewBox="0 0 29 30"><rect x="0" y="8" width="7" height="21" fill="#6e9bcf"/><rect x="8" y="15" width="6" height="14" fill="#d8c868"/><rect x="15" y="1" width="7" height="28" fill="#6e9bcf"/><rect x="23" y="6" width="6" height="23" fill="#d8c868"/></svg>
<div class="rl " style="left:955.1px;top:41px;letter-spacing:0.012px">Chart</div>
<svg style="position:absolute;left:967px;top:63px" width="5" height="3" viewBox="0 0 5 3"><path d="M0 0h5L2.500 3z" fill="#444"/></svg>
<svg style="position:absolute;left:996px;top:6px" width="31" height="31" viewBox="0 0 31 31"><rect x="4.500" y="10.500" width="25" height="19" fill="#f1eef2" stroke="#c8c6c4"/><path d="M4.500 16h25M4.500 23h25M12 16v13.500" stroke="#c8c6c4"/><circle cx="10.500" cy="10.500" r="10" fill="#b3b0ad"/><text x="10.500" y="17" font-family="Liberation Serif,serif" font-weight="bold" font-size="17" fill="#f3f3f3" text-anchor="middle">i</text></svg>
<div class="rl dimt" style="left:1001.0px;top:41px;letter-spacing:0.31px">Info</div>
<div class="rl dimt" style="left:994.5px;top:57px;letter-spacing:-0.269px">Field</div>
<svg style="position:absolute;left:1023px;top:64px" width="5" height="3" viewBox="0 0 5 3"><path d="M0 0h5L2.500 3z" fill="#b1b1b1"/></svg>
<svg style="position:absolute;left:1038px;top:6px" width="32" height="30" viewBox="0 0 32 30"><path d="M.5 3.500h31L19.500 16v13h-7V16z" fill="#dcdad8"/><path d="M5 5h6v7h4l-7 7-7-7h4z" fill="#b3b0ad" transform="translate(0,1)"/></svg>
<div class="rl dimt" style="left:1040.5px;top:41px;letter-spacing:0.061px">Filter</div>
<svg style="position:absolute;left:1051px;top:63px" width="5" height="3" viewBox="0 0 5 3"><path d="M0 0h5L2.500 3z" fill="#b1b1b1"/></svg>
<div class="rl grp" style="left:996.5px;top:76px;letter-spacing:-0.057px">Insert</div>
<div class="rsep" style="left:1079px"></div>
<svg style="position:absolute;left:1098px;top:6px" width="30" height="27" viewBox="0 0 30 27"><rect x=".5" y=".5" width="28" height="3.500" fill="#dde6f3" stroke="#8a8886"/><rect x=".5" y="22" width="17" height="3.500" fill="#dde6f3" stroke="#8a8886"/><text x="4" y="20" font-family="Liberation Serif,serif" font-style="italic" font-size="23" fill="#555">f</text><text x="11" y="20" font-family="Liberation Serif,serif" font-style="italic" font-size="12" fill="#555">x</text><path d="M16 4l3 6 2.500-2.500c3 1.500 3 5-1.500 7.500l.5 2c7-1 9-7.500 3.500-12l2-2z" fill="#e8833a"/></svg>
<div class="rl " style="left:1086.2px;top:41px;letter-spacing:0.057px">Convert to</div>
<div class="rl " style="left:1091.5px;top:57px;letter-spacing:0.091px">Formula</div>
<svg style="position:absolute;left:1167px;top:6px" width="33" height="32" viewBox="0 0 33 32"><rect x="5.500" y=".5" width="26" height="25" fill="#f1eef2" stroke="#c8c6c4"/><rect x="5.500" y=".5" width="26" height="4.500" fill="#e3e0e3" stroke="#c8c6c4"/><rect x="26" y="9" width="3" height="3" fill="#c8c6c4"/><rect x="26" y="14.500" width="3" height="3" fill="#c8c6c4"/><path d="M2 8c-3 5-1 11 5 14l-1.500 3 8-1.500-3-7-1.500 2.500C5 17.500 3.500 13 6 9z" fill="#b3b0ad"/><path d="M19 28l7-6 3 3-7 6z" fill="#c8c6c4"/></svg>
<div class="rl dimt" style="left:1146.5px;top:41px;letter-spacing:-0.051px">Launch Query</div>
<div class="rl dimt" style="left:1160.5px;top:57px;letter-spacing:-0.137px">Designer</div>
<svg style="position:absolute;left:1227px;top:6px" width="17" height="17" viewBox="0 0 17 17"><path d="M3.500 .5h6l3 3v9h-9z" fill="#fff" stroke="#6a6a6a"/><path d="M6.500 3.500h6l3 3v9h-9z" fill="#fff" stroke="#6a6a6a"/><path d="M9 9h5M9 11.500h5" stroke="#6a6a6a" stroke-width=".9"/><circle cx="3.7" cy="12" r="2.5" fill="#1e74c4"/><path d="M5.90 12.00L7.30 12.00M5.26 13.56L6.25 14.55M3.70 14.20L3.70 15.60M2.14 13.56L1.15 14.55M1.50 12.00L0.10 12.00M2.14 10.44L1.15 9.45M3.70 9.80L3.70 8.40M5.26 10.44L6.25 9.45" stroke="#1e74c4" stroke-width="1.3"/><circle cx="3.7" cy="12" r="0.95" fill="#fff"/></svg>
<div class="rl " style="left:1245.5px;top:7px;letter-spacing:-0.037px">Smart Copy</div>
<svg style="position:absolute;left:1227px;top:29px" width="17" height="17" viewBox="0 0 17 17"><rect x="1.500" y="2" width="9" height="11" fill="#eae7ea" stroke="#c8c6c4"/><rect x="4" y=".5" width="4" height="2.500" fill="#c8c6c4"/><path d="M6.500 5.500h6l3 3v7h-9z" fill="#f6f4f6" stroke="#c8c6c4"/><path d="M9 10h4M9 12.500h4" stroke="#c8c6c4" stroke-width=".9"/><circle cx="4" cy="13" r="2.4" fill="#b3b0ad"/><path d="M6.10 13.00L7.50 13.00M5.48 14.48L6.47 15.47M4.00 15.10L4.00 16.50M2.52 14.48L1.53 15.47M1.90 13.00L0.50 13.00M2.52 11.52L1.53 10.53M4.00 10.90L4.00 9.50M5.48 11.52L6.47 10.53" stroke="#b3b0ad" stroke-width="1.3"/><circle cx="4" cy="13" r="0.91" fill="#f3f3f3"/></svg>
<div class="rl dimt" style="left:1245.5px;top:30px;letter-spacing:-0.288px">Smart Paste</div>
<svg style="position:absolute;left:1227px;top:52px" width="17" height="16" viewBox="0 0 17 16"><rect x=".5" y=".5" width="11" height="9.500" fill="#fff" stroke="#6a6a6a"/><path d="M.5 2.500h11" stroke="#6a6a6a"/><rect x="7.500" y="6.500" width="8" height="8" fill="#fff" stroke="#6a6a6a"/><rect x="9.500" y="11" width="4" height="3.500" fill="#6e9bcf"/><path d="M9 7v2.500h5V7" fill="none" stroke="#6a6a6a" stroke-width=".8"/></svg>
<div class="rl " style="left:1245.5px;top:53px;letter-spacing:-0.409px">Save View</div>
<div class="rl grp" style="left:1186.2px;top:76px;letter-spacing:-0.492px">Tools</div>
<div class="rsep" style="left:1319px"></div>
<div id="dispbtn"></div>
<svg style="position:absolute;left:1330px;top:7px" width="26" height="30" viewBox="0 0 26 30"><rect x="7.500" y=".5" width="17" height="28" fill="#fff" stroke="#8a8886"/><rect x="7.500" y=".5" width="17" height="4.500" fill="#c5d5ea" stroke="#8a8886"/><path d="M16.500 5v23.500M16.500 14.500h8" stroke="#8a8886"/><path d="M9.500 20h5M9.500 22.500h5M9.500 25h5M18.500 8h3M18.500 17.500h3" stroke="#8a8886" stroke-width=".9"/><path d="M1 17l2-2 4 4 8-10 2 2-10 12z" fill="#5aa381"/></svg>
<div class="rl " style="left:1326.1px;top:41px;letter-spacing:-0.146px">Display</div>
<svg style="position:absolute;left:1343px;top:63px" width="5" height="3" viewBox="0 0 5 3"><path d="M0 0h5L2.500 3z" fill="#444"/></svg>
<svg style="position:absolute;left:1372px;top:7px" width="25" height="29" viewBox="0 0 25 29"><rect x="7.500" y=".5" width="16" height="27" fill="#fff" stroke="#8a8886"/><rect x="7.500" y=".5" width="16" height="4.500" fill="#c5d5ea" stroke="#8a8886"/><path d="M16.500 5v22.500" stroke="#8a8886"/><path d="M9.500 8h5M9.500 10.500h5M9.500 17h5M9.500 19.500h5M9.500 22h5M9.500 24.500h5" stroke="#8a8886" stroke-width=".9"/><rect x="0" y="7" width="4.500" height="12" fill="#3b79bd"/><rect x="6" y="7" width="4" height="12" fill="#3b79bd"/><path d="M20 9v14M18 11.500l2-2.500 2 2.500M18 20.500l2 2.500 2-2.500" stroke="#3b79bd" stroke-width="1.200" fill="none"/></svg>
<div class="rl " style="left:1373.0px;top:41px;letter-spacing:-0.561px">Pause</div>
<div class="rl " style="left:1368.5px;top:57px;letter-spacing:-0.31px">Refresh</div>
<div class="rl grp" style="left:1334.0px;top:76px;letter-spacing:-0.363px">Design Panel</div>
<div class="rsep" style="left:1415px"></div>
<svg style="position:absolute;left:1900px;top:81px" width="9" height="6" viewBox="0 0 9 6"><path d="M.7 5.300L4.500 1.500l3.800 3.800" fill="none" stroke="#444" stroke-width="1.300"/></svg>
</div>
<div id="fbar">
<div id="namebox"><span>I31</span><svg width="7" height="4" viewBox="0 0 7 4" style="position:absolute;left:88px;top:10px"><path d="M0 0h7L3.500 4z" fill="#666"/></svg></div>
<div id="fdots"><i></i><i></i><i></i></div>
<div id="fbtns"><svg width="108" height="24" viewBox="0 0 108 24"><path d="M13 7l9 9M22 7l-9 9" stroke="#b5b5b5" stroke-width="1.300" fill="none"/><path d="M49 12.500l3.500 3.500 8-9" stroke="#b5b5b5" stroke-width="1.600" fill="none"/><text x="84" y="17" font-family="Liberation Serif,serif" font-style="italic" font-size="15" fill="#555">f</text><text x="90" y="17" font-family="Liberation Serif,serif" font-style="italic" font-weight="bold" font-size="9" fill="#555">x</text></svg></div>
<div id="finput"><span>81800</span><svg width="9" height="6" viewBox="0 0 9 6" style="position:absolute;right:8px;top:9px"><path d="M.7 .7L4.500 4.500l3.800-3.800" fill="none" stroke="#555" stroke-width="1.400"/></svg></div>
</div>
<div id="vscroll"><div class="sbtn" style="top:2px"><svg width="15" height="15" viewBox="0 0 15 15"><path d="M4 9.500h7L7.500 5.500z" fill="#777"/></svg></div><div id="vthumb"></div><div class="sbtn" style="top:773px"><svg width="15" height="15" viewBox="0 0 15 15"><path d="M4 5.500h7L7.500 9.500z" fill="#777"/></svg></div></div>
<div id="tabbar"><div style="position:absolute;left:0;top:0;width:1318px;height:1px;background:#ababab"></div><div style="position:absolute;left:1339px;top:0;width:1px;height:22px;background:#b5b5b5"></div>
<svg style="position:absolute;left:26px;top:8px" width="6" height="9" viewBox="0 0 6 9"><path d="M5 .5v8L.5 4.500z" fill="#c8c8c8"/></svg>
<svg style="position:absolute;left:55px;top:8px" width="6" height="9" viewBox="0 0 6 9"><path d="M1 .5v8L5.500 4.500z" fill="#c8c8c8"/></svg>
<div id="sheet1">Sheet1</div>
<svg style="position:absolute;left:197px;top:5px" width="17" height="17" viewBox="0 0 17 17"><circle cx="8.500" cy="8.500" r="7.500" fill="none" stroke="#777" stroke-width="1.100"/><path d="M8.500 4.500v8M4.500 8.500h8" stroke="#666" stroke-width="1.500"/></svg>
<div id="hdots"><i></i><i></i><i></i></div>
<div id="hscroll"><div class="hbtn" style="left:0"><svg width="13" height="13" viewBox="0 0 13 13"><path d="M8 3v7L4 6.500z" fill="#555"/></svg></div><div id="hthumb"></div><div class="hbtn" style="right:0"><svg width="13" height="13" viewBox="0 0 13 13"><path d="M5 3v7l4-3.500z" fill="#555"/></svg></div></div>
</div>
<div id="status">
<div class="t" style="left:7px;top:4px;font-size:12px;color:#444">Ready</div>
<svg style="position:absolute;left:58px;top:6px" width="14" height="13" viewBox="0 0 14 13"><circle cx="3" cy="3" r="2.800" fill="#555"/><rect x="2.500" y="3.500" width="11" height="9" fill="#f3f3f3" stroke="#555"/><path d="M7 1.500h6.500v2" fill="none" stroke="#555"/><path d="M4.500 6.500h7M4.500 8.500h7M4.500 10.500h7" stroke="#555" stroke-width=".9" stroke-dasharray="1.500 1"/></svg>
<div id="viewsel"></div>
<svg style="position:absolute;left:1646px;top:5px" width="13" height="13" viewBox="0 0 13 13"><rect x=".5" y=".5" width="12" height="12" fill="none" stroke="#555"/><path d="M.5 4.500h12M.5 8.500h12M4.500 .5v12M8.500 .5v12" stroke="#555"/></svg>
<svg style="position:absolute;left:1684px;top:5px" width="14" height="13" viewBox="0 0 14 13"><rect x=".5" y=".5" width="13" height="12" fill="none" stroke="#555"/><rect x="3.500" y="3.500" width="7" height="6" fill="none" stroke="#555"/><path d="M5 5.500h4M5 7.500h4" stroke="#555" stroke-width=".8"/></svg>
<svg style="position:absolute;left:1722px;top:4px" width="14" height="13" viewBox="0 0 14 13"><rect x=".5" y=".5" width="13" height="12" fill="none" stroke="#555"/><path d="M4.500 .5v7h5v-7M.5 7.500h13" fill="none" stroke="#555"/></svg>
<div style="position:absolute;left:1753px;top:11px;width:7px;height:2px;background:#555"></div>
<div style="position:absolute;left:1763px;top:11px;width:100px;height:1px;background:#8a8a8a"></div>
<div style="position:absolute;left:1811px;top:6px;width:4px;height:12px;background:#555"></div>
<svg style="position:absolute;left:1866px;top:8px" width="8" height="8" viewBox="0 0 8 8"><path d="M4 0v8M0 4h8" stroke="#555" stroke-width="1.600"/></svg>
<div class="t" style="left:1884.800px;top:3px;font-size:12px;color:#444;letter-spacing:-0.883px">100%</div>
</div>
<div id="sheet">
<div id="grid"><i style="left:1209px"></i></div>
<div id="iborder"></div>
<div class="ch" style="left:27px;width:101px">A</div>
<div class="ch" style="left:128px;width:151px">B</div>
<div class="ch" style="left:279px;width:96px">C</div>
<div class="ch" style="left:375px;width:93px">D</div>
<div class="ch" style="left:468px;width:134px">E</div>
<div class="ch" style="left:602px;width:125px">F</div>
<div class="ch" style="left:727px;width:131px">G</div>
<div class="ch" style="left:858px;width:131px">H</div>
<div class="ch sel" style="left:989px;width:116px">I</div>
<div class="ch" style="left:1105px;width:131px">J</div>
<div class="ch" style="left:1236px;width:131px">K</div>
<div id="corner"></div>
<div class="rh" style="top:20px">1</div>
<div class="rh" style="top:40px">2</div>
<div class="rh" style="top:60px">3</div>
<div class="rh" style="top:80px">4</div>
<div class="rh" style="top:100px">5</div>
<div class="rh" style="top:120px">6</div>
<div class="rh" style="top:140px">7</div>
<div class="rh" style="top:160px">8</div>
<div class="rh" style="top:180px">9</div>
<div class="rh" style="top:200px">10</div>
<div class="rh" style="top:220px">11</div>
<div class="rh" style="top:240px">12</div>
<div class="rh" style="top:260px">13</div>
<div class="rh" style="top:280px">14</div>
<div class="rh" style="top:300px">15</div>
<div class="rh" style="top:320px">16</div>
<div class="rh" style="top:340px">17</div>
<div class="rh" style="top:360px">18</div>
<div class="rh" style="top:380px">19</div>
<div class="rh" style="top:400px">20</div>
<div class="rh" style="top:420px">21</div>
<div class="rh" style="top:440px">22</div>
<div class="rh" style="top:460px">23</div>
<div class="rh" style="top:480px">24</div>
<div class="rh" style="top:500px">25</div>
<div class="rh" style="top:520px">26</div>
<div class="rh" style="top:540px">27</div>
<div class="rh" style="top:560px">28</div>
<div class="rh" style="top:580px">29</div>
<div class="rh" style="top:600px">30</div>
<div class="rh sel" style="top:620px">31</div>
<div class="rh" style="top:640px">32</div>
<div class="rh" style="top:660px">33</div>
<div class="rh" style="top:680px">34</div>
<div class="rh" style="top:700px">35</div>
<div class="rh" style="top:720px">36</div>
<div class="rh" style="top:740px">37</div>
<div class="rh" style="top:760px">38</div>
<div class="rh" style="top:780px">39</div>
<div class="c h" style="left:27px;top:20px;width:101px"></div>
<div class="c h" style="left:128px;top:20px;width:151px"></div>
<div class="c h" style="left:279px;top:20px;width:96px"></div>
<div class="c h" style="left:375px;top:20px;width:93px"></div>
<div class="c h" style="left:468px;top:20px;width:134px;letter-spacing:0.333px">Amount in Trans Crcy</div>
<div class="c h" style="left:602px;top:20px;width:125px;letter-spacing:0.285px">Cr Amt in Glob Crcy</div>
<div class="c h" style="left:727px;top:20px;width:131px;letter-spacing:0.35px">Amt in BalTrans Crcy</div>
<div class="c h" style="left:858px;top:20px;width:131px;letter-spacing:0.382px">Cr Amt in Trans Crcy</div>
<div class="c h" style="left:989px;top:20px;width:116px;letter-spacing:0.527px">Dr Amt in CC Crcy</div>
<div class="c h b" style="left:27px;top:40px;width:101px;letter-spacing:0.598px;padding-left:1px">G/L Account</div>
<div class="c h b" style="left:128px;top:40px;width:151px"></div>
<div class="c h b" style="left:279px;top:40px;width:96px;letter-spacing:0.453px">Account Type</div>
<div class="c h b" style="left:375px;top:40px;width:93px;letter-spacing:0.207px">WBS Element</div>
<div class="c h b" style="left:468px;top:40px;width:134px"></div>
<div class="c h r" style="left:602px;top:40px;width:125px;letter-spacing:0.001px">$</div>
<div class="c h b" style="left:727px;top:40px;width:131px"></div>
<div class="c h b" style="left:858px;top:40px;width:131px"></div>
<div class="c h b" style="left:989px;top:40px;width:116px"></div>
<div class="c h" style="left:27px;top:60px;width:101px;letter-spacing:0.271px;padding-left:1px">YCOA/17007000</div>
<div class="c h" style="left:128px;top:60px;width:151px;letter-spacing:0.14px">Acc.Depr'n Comput HW</div>
<div class="c h" style="left:279px;top:60px;width:96px;letter-spacing:0.2px">Assets</div>
<div class="c h" style="left:375px;top:60px;width:93px;letter-spacing:0.106px">Not assigned</div>
<div class="c d r" style="left:468px;top:60px;width:134px;letter-spacing:0.232px">$ -2 700,00</div>
<div class="c d r" style="left:602px;top:60px;width:125px;letter-spacing:0.227px">-3 810,30</div>
<div class="c d r" style="left:727px;top:60px;width:131px;letter-spacing:0.232px">$ -2 700,00</div>
<div class="c d r" style="left:858px;top:60px;width:131px;letter-spacing:0.232px">$ -4 400,00</div>
<div class="c d r last" style="left:989px;top:60px;width:116px;letter-spacing:0.152px">$ 1 700,00</div>
<div class="c h" style="left:27px;top:80px;width:101px"></div>
<div class="c h" style="left:128px;top:80px;width:151px"></div>
<div class="c h" style="left:279px;top:80px;width:96px;letter-spacing:0.106px">Not assigned</div>
<div class="c h" style="left:375px;top:80px;width:93px;letter-spacing:0.106px">Not assigned</div>
<div class="c d r pre" style="left:468px;top:80px;width:134px;letter-spacing:0.232px">$ -2 700,00</div>
<div class="c d r pre" style="left:602px;top:80px;width:125px;letter-spacing:0.227px">-3 810,30</div>
<div class="c d r pre" style="left:727px;top:80px;width:131px;letter-spacing:0.232px">$ -2 700,00</div>
<div class="c d r pre" style="left:858px;top:80px;width:131px;letter-spacing:0.232px">$ -4 400,00</div>
<div class="c d r pre last" style="left:989px;top:80px;width:116px;letter-spacing:0.152px">$ 1 700,00</div>
<div class="c h b" style="left:27px;top:100px;width:101px"></div>
<div class="c h b" style="left:128px;top:100px;width:151px"></div>
<div class="c h b" style="left:279px;top:100px;width:96px;letter-spacing:0.11px">Result</div>
<div class="c h b" style="left:375px;top:100px;width:93px"></div>
<div class="c d r b res" style="left:468px;top:100px;width:134px;letter-spacing:0.275px">$ -5 400,00</div>
<div class="c d r b res" style="left:602px;top:100px;width:125px;letter-spacing:0.278px">-7 620,60</div>
<div class="c d r b res" style="left:727px;top:100px;width:131px;letter-spacing:0.275px">$ -5 400,00</div>
<div class="c d r b res" style="left:858px;top:100px;width:131px;letter-spacing:0.275px">$ -8 800,00</div>
<div class="c d r b res last" style="left:989px;top:100px;width:116px;letter-spacing:0.259px">$ 3 400,00</div>
<div class="c h" style="left:27px;top:120px;width:101px;letter-spacing:0.271px;padding-left:1px">YCOA/17004000</div>
<div class="c h" style="left:128px;top:120px;width:151px;letter-spacing:0.207px">Acc.Depr'n Motor Veh</div>
<div class="c h" style="left:279px;top:120px;width:96px;letter-spacing:0.2px">Assets</div>
<div class="c h" style="left:375px;top:120px;width:93px;letter-spacing:0.106px">Not assigned</div>
<div class="c d r" style="left:468px;top:120px;width:134px;letter-spacing:0.127px">$ 641,00</div>
<div class="c d r" style="left:602px;top:120px;width:125px;letter-spacing:0.22px">-184,00</div>
<div class="c d r" style="left:727px;top:120px;width:131px;letter-spacing:0.127px">$ 641,00</div>
<div class="c d r" style="left:858px;top:120px;width:131px;letter-spacing:0.227px">$ -184,00</div>
<div class="c d r last" style="left:989px;top:120px;width:116px;letter-spacing:0.127px">$ 825,00</div>
<div class="c h" style="left:27px;top:140px;width:101px;letter-spacing:0.271px;padding-left:1px">YCOA/65002000</div>
<div class="c h" style="left:128px;top:140px;width:151px;letter-spacing:0.252px">Advert.& Sales Costs</div>
<div class="c h" style="left:279px;top:140px;width:96px;letter-spacing:0.216px">G/L accounts</div>
<div class="c h" style="left:375px;top:140px;width:93px;letter-spacing:0.106px">Not assigned</div>
<div class="c d r" style="left:468px;top:140px;width:134px;letter-spacing:0.138px">$ 25 000,00</div>
<div class="c d r" style="left:602px;top:140px;width:125px;letter-spacing:0.227px">-4 000,00</div>
<div class="c d r" style="left:727px;top:140px;width:131px;letter-spacing:0.138px">$ 25 000,00</div>
<div class="c d r" style="left:858px;top:140px;width:131px;letter-spacing:0.232px">$ -4 000,00</div>
<div class="c d r last" style="left:989px;top:140px;width:116px;letter-spacing:0.138px">$ 29 000,00</div>
<div class="c h" style="left:27px;top:160px;width:101px;letter-spacing:0.271px;padding-left:1px">YCOA/16009000</div>
<div class="c h" style="left:128px;top:160px;width:151px;letter-spacing:0.278px">Assets under Constr.</div>
<div class="c h" style="left:279px;top:160px;width:96px;letter-spacing:0.2px">Assets</div>
<div class="c h" style="left:375px;top:160px;width:93px;letter-spacing:0.106px">Not assigned</div>
<div class="c d r" style="left:468px;top:160px;width:134px;letter-spacing:0.169px">$ 0,00</div>
<div class="c d r" style="left:602px;top:160px;width:125px;letter-spacing:0.227px">-1 000,00</div>
<div class="c d r" style="left:727px;top:160px;width:131px;letter-spacing:0.169px">$ 0,00</div>
<div class="c d r" style="left:858px;top:160px;width:131px;letter-spacing:0.232px">$ -1 000,00</div>
<div class="c d r last" style="left:989px;top:160px;width:116px;letter-spacing:0.152px">$ 1 000,00</div>
<div class="c h" style="left:27px;top:180px;width:101px;letter-spacing:0.271px;padding-left:1px">YCOA/11001020</div>
<div class="c h" style="left:128px;top:180px;width:151px;letter-spacing:0.396px">Bank1 Bank Transfer</div>
<div class="c h" style="left:279px;top:180px;width:96px;letter-spacing:0.216px">G/L accounts</div>
<div class="c h" style="left:375px;top:180px;width:93px;letter-spacing:0.106px">Not assigned</div>
<div class="c d r" style="left:468px;top:180px;width:134px;letter-spacing:1.0px">*</div>
<div class="c d r" style="left:602px;top:180px;width:125px;letter-spacing:0.186px">-253 048,96</div>
<div class="c d r" style="left:727px;top:180px;width:131px;letter-spacing:1.0px">*</div>
<div class="c d r" style="left:858px;top:180px;width:131px;letter-spacing:1.0px">*</div>
<div class="c d r last" style="left:989px;top:180px;width:116px;letter-spacing:0.171px">0,00 EUR</div>
<div class="c h" style="left:27px;top:200px;width:101px;letter-spacing:0.271px;padding-left:1px">YCOA/11001010</div>
<div class="c h" style="left:128px;top:200px;width:151px;letter-spacing:0.283px">Bank1 Cash Payment</div>
<div class="c h" style="left:279px;top:200px;width:96px;letter-spacing:0.216px">G/L accounts</div>
<div class="c h" style="left:375px;top:200px;width:93px;letter-spacing:0.106px">Not assigned</div>
<div class="c d r" style="left:468px;top:200px;width:134px;letter-spacing:0.218px">-200,00 EUR</div>
<div class="c d r" style="left:602px;top:200px;width:125px;letter-spacing:0.22px">-183,18</div>
<div class="c d r" style="left:727px;top:200px;width:131px;letter-spacing:0.218px">-200,00 EUR</div>
<div class="c d r" style="left:858px;top:200px;width:131px;letter-spacing:0.218px">-200,00 EUR</div>
<div class="c d r last" style="left:989px;top:200px;width:116px;letter-spacing:0.171px">0,00 EUR</div>
<div class="c h" style="left:27px;top:220px;width:101px;letter-spacing:0.271px;padding-left:1px">YCOA/11001080</div>
<div class="c h" style="left:128px;top:220px;width:151px;letter-spacing:0.232px">Bank1 Cash Receipt</div>
<div class="c h" style="left:279px;top:220px;width:96px;letter-spacing:0.216px">G/L accounts</div>
<div class="c h" style="left:375px;top:220px;width:93px;letter-spacing:0.106px">Not assigned</div>
<div class="c d r" style="left:468px;top:220px;width:134px;letter-spacing:0.152px">$ 1 967,44</div>
<div class="c d r" style="left:602px;top:220px;width:125px;letter-spacing:0.22px">-416,00</div>
<div class="c d r" style="left:727px;top:220px;width:131px;letter-spacing:0.152px">$ 1 967,44</div>
<div class="c d r" style="left:858px;top:220px;width:131px;letter-spacing:0.227px">$ -416,00</div>
<div class="c d r last" style="left:989px;top:220px;width:116px;letter-spacing:0.152px">$ 2 383,44</div>
<div class="c h" style="left:27px;top:240px;width:101px;letter-spacing:0.271px;padding-left:1px">YCOA/11001060</div>
<div class="c h" style="left:128px;top:240px;width:151px;letter-spacing:0.38px">Bank1 Check In</div>
<div class="c h" style="left:279px;top:240px;width:96px;letter-spacing:0.216px">G/L accounts</div>
<div class="c h" style="left:375px;top:240px;width:93px;letter-spacing:0.106px">Not assigned</div>
<div class="c d r" style="left:468px;top:240px;width:134px;letter-spacing:0.145px">$ 80,00</div>
<div class="c d r" style="left:602px;top:240px;width:125px;letter-spacing:0.127px">0,00</div>
<div class="c d r" style="left:727px;top:240px;width:131px;letter-spacing:0.145px">$ 80,00</div>
<div class="c d r" style="left:858px;top:240px;width:131px;letter-spacing:0.169px">$ 0,00</div>
<div class="c d r last" style="left:989px;top:240px;width:116px;letter-spacing:0.145px">$ 80,00</div>
<div class="c h" style="left:27px;top:260px;width:101px;letter-spacing:0.271px;padding-left:1px">YCOA/11001050</div>
<div class="c h" style="left:128px;top:260px;width:151px;letter-spacing:0.24px">Bank1 Check Out</div>
<div class="c h" style="left:279px;top:260px;width:96px;letter-spacing:0.216px">G/L accounts</div>
<div class="c h" style="left:375px;top:260px;width:93px;letter-spacing:0.106px">Not assigned</div>
<div class="c d r" style="left:468px;top:260px;width:134px;letter-spacing:0.127px">$ 264,70</div>
<div class="c d r" style="left:602px;top:260px;width:125px;letter-spacing:0.127px">0,00</div>
<div class="c d r" style="left:727px;top:260px;width:131px;letter-spacing:0.127px">$ 264,70</div>
<div class="c d r" style="left:858px;top:260px;width:131px;letter-spacing:0.169px">$ 0,00</div>
<div class="c d r last" style="left:989px;top:260px;width:116px;letter-spacing:0.127px">$ 264,70</div>
<div class="c h" style="left:27px;top:280px;width:101px;letter-spacing:0.271px;padding-left:1px">YCOA/11001100</div>
<div class="c h" style="left:128px;top:280px;width:151px;letter-spacing:0.292px">Bank1 Foreign Currcy</div>
<div class="c h" style="left:279px;top:280px;width:96px;letter-spacing:0.216px">G/L accounts</div>
<div class="c h" style="left:375px;top:280px;width:93px;letter-spacing:0.106px">Not assigned</div>
<div class="c d r" style="left:468px;top:280px;width:134px;letter-spacing:0.208px">-70 000,00 EUR</div>
<div class="c d r" style="left:602px;top:280px;width:125px;letter-spacing:0.205px">-58 333,34</div>
<div class="c d r" style="left:727px;top:280px;width:131px;letter-spacing:0.208px">-70 000,00 EUR</div>
<div class="c d r" style="left:858px;top:280px;width:131px;letter-spacing:0.208px">-70 000,00 EUR</div>
<div class="c d r last" style="left:989px;top:280px;width:116px;letter-spacing:0.169px">$ 0,00</div>
<div class="c h" style="left:27px;top:300px;width:101px;letter-spacing:0.271px;padding-left:1px">YCOA/11001000</div>
<div class="c h" style="left:128px;top:300px;width:151px;letter-spacing:0.15px">Bank1 Main Account</div>
<div class="c h" style="left:279px;top:300px;width:96px;letter-spacing:0.216px">G/L accounts</div>
<div class="c h" style="left:375px;top:300px;width:93px;letter-spacing:0.106px">Not assigned</div>
<div class="c d r" style="left:468px;top:300px;width:134px;letter-spacing:0.213px">$ -67 376,00</div>
<div class="c d r" style="left:602px;top:300px;width:125px;letter-spacing:0.205px">-67 792,00</div>
<div class="c d r" style="left:727px;top:300px;width:131px;letter-spacing:0.213px">$ -67 316,00</div>
<div class="c d r" style="left:858px;top:300px;width:131px;letter-spacing:0.213px">$ -67 792,00</div>
<div class="c d r last" style="left:989px;top:300px;width:116px;letter-spacing:0.127px">$ 476,00</div>
<div class="c h" style="left:27px;top:320px;width:101px;letter-spacing:0.271px;padding-left:1px">YCOA/11001090</div>
<div class="c h" style="left:128px;top:320px;width:151px;letter-spacing:0.293px">Bank1 Techn. Account</div>
<div class="c h" style="left:279px;top:320px;width:96px;letter-spacing:0.216px">G/L accounts</div>
<div class="c h" style="left:375px;top:320px;width:93px;letter-spacing:0.106px">Not assigned</div>
<div class="c d r" style="left:468px;top:320px;width:134px;letter-spacing:0.152px">$ 2 382,00</div>
<div class="c d r" style="left:602px;top:320px;width:125px;letter-spacing:0.127px">0,00</div>
<div class="c d r" style="left:727px;top:320px;width:131px;letter-spacing:0.152px">$ 2 382,00</div>
<div class="c d r" style="left:858px;top:320px;width:131px;letter-spacing:0.169px">$ 0,00</div>
<div class="c d r last" style="left:989px;top:320px;width:116px;letter-spacing:0.152px">$ 2 382,00</div>
<div class="c h" style="left:27px;top:340px;width:101px;letter-spacing:0.271px;padding-left:1px">YCOA/11002020</div>
<div class="c h" style="left:128px;top:340px;width:151px;letter-spacing:0.396px">Bank2 Bank Transfer</div>
<div class="c h" style="left:279px;top:340px;width:96px;letter-spacing:0.216px">G/L accounts</div>
<div class="c h" style="left:375px;top:340px;width:93px;letter-spacing:0.106px">Not assigned</div>
<div class="c d r" style="left:468px;top:340px;width:134px;letter-spacing:0.232px">$ -2 383,44</div>
<div class="c d r" style="left:602px;top:340px;width:125px;letter-spacing:0.227px">-2 383,44</div>
<div class="c d r" style="left:727px;top:340px;width:131px;letter-spacing:0.232px">$ -2 383,44</div>
<div class="c d r" style="left:858px;top:340px;width:131px;letter-spacing:0.232px">$ -2 383,44</div>
<div class="c d r last" style="left:989px;top:340px;width:116px;letter-spacing:0.169px">$ 0,00</div>
<div class="c h" style="left:27px;top:360px;width:101px;letter-spacing:0.271px;padding-left:1px">YCOA/11002080</div>
<div class="c h" style="left:128px;top:360px;width:151px;letter-spacing:0.232px">Bank2 Cash Receipt</div>
<div class="c h" style="left:279px;top:360px;width:96px;letter-spacing:0.216px">G/L accounts</div>
<div class="c h" style="left:375px;top:360px;width:93px;letter-spacing:0.106px">Not assigned</div>
<div class="c d r" style="left:468px;top:360px;width:134px;letter-spacing:0.127px">$ 238 344,00</div>
<div class="c d r" style="left:602px;top:360px;width:125px;letter-spacing:0.227px">-8 000,00</div>
<div class="c d r" style="left:727px;top:360px;width:131px;letter-spacing:0.127px">$ 238 344,00</div>
<div class="c d r" style="left:858px;top:360px;width:131px;letter-spacing:0.232px">$ -8 000,00</div>
<div class="c d r last" style="left:989px;top:360px;width:116px;letter-spacing:0.127px">$ 246 344,00</div>
<div class="c h" style="left:27px;top:380px;width:101px;letter-spacing:0.271px;padding-left:1px">YCOA/11002000</div>
<div class="c h" style="left:128px;top:380px;width:151px;letter-spacing:0.15px">Bank2 Main Account</div>
<div class="c h" style="left:279px;top:380px;width:96px;letter-spacing:0.216px">G/L accounts</div>
<div class="c h" style="left:375px;top:380px;width:93px;letter-spacing:0.106px">Not assigned</div>
<div class="c d r" style="left:468px;top:380px;width:134px;letter-spacing:0.227px">$ -800,00</div>
<div class="c d r" style="left:602px;top:380px;width:125px;letter-spacing:0.22px">-800,00</div>
<div class="c d r" style="left:727px;top:380px;width:131px;letter-spacing:0.227px">$ -800,00</div>
<div class="c d r" style="left:858px;top:380px;width:131px;letter-spacing:0.227px">$ -800,00</div>
<div class="c d r last" style="left:989px;top:380px;width:116px;letter-spacing:0.169px">$ 0,00</div>
<div class="c h" style="left:27px;top:400px;width:101px;letter-spacing:0.271px;padding-left:1px">YCOA/63008000</div>
<div class="c h" style="left:128px;top:400px;width:151px;letter-spacing:0.272px">Building PerSer</div>
<div class="c h" style="left:279px;top:400px;width:96px;letter-spacing:0.216px">G/L accounts</div>
<div class="c h" style="left:375px;top:400px;width:93px;letter-spacing:0.106px">Not assigned</div>
<div class="c d r" style="left:468px;top:400px;width:134px;letter-spacing:0.213px">$ -28 000,00</div>
<div class="c d r" style="left:602px;top:400px;width:125px;letter-spacing:0.205px">-78 000,00</div>
<div class="c d r" style="left:727px;top:400px;width:131px;letter-spacing:0.213px">$ -28 000,00</div>
<div class="c d r" style="left:858px;top:400px;width:131px;letter-spacing:0.213px">$ -78 000,00</div>
<div class="c d r last" style="left:989px;top:400px;width:116px;letter-spacing:0.138px">$ 50 000,00</div>
<div class="c h" style="left:27px;top:420px;width:101px;letter-spacing:0.271px;padding-left:1px">YCOA/70030000</div>
<div class="c h" style="left:128px;top:420px;width:151px;letter-spacing:0.253px">Clear ass.disp.</div>
<div class="c h" style="left:279px;top:420px;width:96px;letter-spacing:0.216px">G/L accounts</div>
<div class="c h" style="left:375px;top:420px;width:93px;letter-spacing:0.106px">Not assigned</div>
<div class="c d r" style="left:468px;top:420px;width:134px;letter-spacing:0.152px">$ 4 000,00</div>
<div class="c d r" style="left:602px;top:420px;width:125px;letter-spacing:0.227px">-5 660,38</div>
<div class="c d r" style="left:727px;top:420px;width:131px;letter-spacing:0.152px">$ 4 000,00</div>
<div class="c d r" style="left:858px;top:420px;width:131px;letter-spacing:0.232px">$ -5 660,38</div>
<div class="c d r last" style="left:989px;top:420px;width:116px;letter-spacing:0.152px">$ 9 660,38</div>
<div class="c h" style="left:27px;top:440px;width:101px;letter-spacing:0.271px;padding-left:1px">YCOA/16014100</div>
<div class="c h" style="left:128px;top:440px;width:151px;letter-spacing:0.171px">Clrng Asset Acquisit</div>
<div class="c h" style="left:279px;top:440px;width:96px;letter-spacing:0.216px">G/L accounts</div>
<div class="c h" style="left:375px;top:440px;width:93px;letter-spacing:0.106px">Not assigned</div>
<div class="c d r" style="left:468px;top:440px;width:134px;letter-spacing:0.213px">$ -11 000,00</div>
<div class="c d r" style="left:602px;top:440px;width:125px;letter-spacing:0.205px">-18 400,00</div>
<div class="c d r" style="left:727px;top:440px;width:131px;letter-spacing:0.213px">$ -11 000,00</div>
<div class="c d r" style="left:858px;top:440px;width:131px;letter-spacing:0.213px">$ -18 400,00</div>
<div class="c d r last" style="left:989px;top:440px;width:116px;letter-spacing:0.152px">$ 7 400,00</div>
<div class="c h" style="left:27px;top:460px;width:101px;letter-spacing:0.271px;padding-left:1px">YCOA/50301000</div>
<div class="c h" style="left:128px;top:460px;width:151px;letter-spacing:0.177px">COGS Direct Material</div>
<div class="c h" style="left:279px;top:460px;width:96px;letter-spacing:0.216px">G/L accounts</div>
<div class="c h" style="left:375px;top:460px;width:93px;letter-spacing:0.106px">Not assigned</div>
<div class="c d r" style="left:468px;top:460px;width:134px;letter-spacing:0.145px">$ 3 047 933,84</div>
<div class="c d r" style="left:602px;top:460px;width:125px;letter-spacing:0.127px">0,00</div>
<div class="c d r" style="left:727px;top:460px;width:131px;letter-spacing:0.145px">$ 3 047 933,84</div>
<div class="c d r" style="left:858px;top:460px;width:131px;letter-spacing:0.169px">$ 0,00</div>
<div class="c d r last" style="left:989px;top:460px;width:116px;letter-spacing:0.145px">$ 3 047 933,84</div>
<div class="c h" style="left:27px;top:480px;width:101px;letter-spacing:0.271px;padding-left:1px">YCOA/50305000</div>
<div class="c h" style="left:128px;top:480px;width:151px;letter-spacing:0.247px">COGS Machine Time</div>
<div class="c h" style="left:279px;top:480px;width:96px;letter-spacing:0.216px">G/L accounts</div>
<div class="c h" style="left:375px;top:480px;width:93px;letter-spacing:0.106px">Not assigned</div>
<div class="c d r" style="left:468px;top:480px;width:134px;letter-spacing:0.127px">$ 306 301,38</div>
<div class="c d r" style="left:602px;top:480px;width:125px;letter-spacing:0.127px">0,00</div>
<div class="c d r" style="left:727px;top:480px;width:131px;letter-spacing:0.127px">$ 306 301,38</div>
<div class="c d r" style="left:858px;top:480px;width:131px;letter-spacing:0.169px">$ 0,00</div>
<div class="c d r last" style="left:989px;top:480px;width:116px;letter-spacing:0.127px">$ 306 301,38</div>
<div class="c h" style="left:27px;top:500px;width:101px;letter-spacing:0.271px;padding-left:1px">YCOA/50303000</div>
<div class="c h" style="left:128px;top:500px;width:151px;letter-spacing:0.263px">COGS Material Overhd</div>
<div class="c h" style="left:279px;top:500px;width:96px;letter-spacing:0.216px">G/L accounts</div>
<div class="c h" style="left:375px;top:500px;width:93px;letter-spacing:0.106px">Not assigned</div>
<div class="c d r" style="left:468px;top:500px;width:134px;letter-spacing:0.127px">$ 152 018,72</div>
<div class="c d r" style="left:602px;top:500px;width:125px;letter-spacing:0.127px">0,00</div>
<div class="c d r" style="left:727px;top:500px;width:131px;letter-spacing:0.127px">$ 152 018,72</div>
<div class="c d r" style="left:858px;top:500px;width:131px;letter-spacing:0.169px">$ 0,00</div>
<div class="c d r last" style="left:989px;top:500px;width:116px;letter-spacing:0.127px">$ 152 018,72</div>
<div class="c h" style="left:27px;top:520px;width:101px;letter-spacing:0.271px;padding-left:1px">YCOA/50304000</div>
<div class="c h" style="left:128px;top:520px;width:151px;letter-spacing:0.341px">COGS Personnel Time</div>
<div class="c h" style="left:279px;top:520px;width:96px;letter-spacing:0.216px">G/L accounts</div>
<div class="c h" style="left:375px;top:520px;width:93px;letter-spacing:0.106px">Not assigned</div>
<div class="c d r" style="left:468px;top:520px;width:134px;letter-spacing:0.127px">$ 476 014,28</div>
<div class="c d r" style="left:602px;top:520px;width:125px;letter-spacing:0.127px">0,00</div>
<div class="c d r" style="left:727px;top:520px;width:131px;letter-spacing:0.127px">$ 476 014,28</div>
<div class="c d r" style="left:858px;top:520px;width:131px;letter-spacing:0.169px">$ 0,00</div>
<div class="c d r last" style="left:989px;top:520px;width:116px;letter-spacing:0.127px">$ 476 014,28</div>
<div class="c h" style="left:27px;top:540px;width:101px;letter-spacing:0.271px;padding-left:1px">YCOA/50307000</div>
<div class="c h" style="left:128px;top:540px;width:151px;letter-spacing:0.31px">COGS Productn Overhd</div>
<div class="c h" style="left:279px;top:540px;width:96px;letter-spacing:0.216px">G/L accounts</div>
<div class="c h" style="left:375px;top:540px;width:93px;letter-spacing:0.106px">Not assigned</div>
<div class="c d r" style="left:468px;top:540px;width:134px;letter-spacing:0.127px">$ 114 837,08</div>
<div class="c d r" style="left:602px;top:540px;width:125px;letter-spacing:0.127px">0,00</div>
<div class="c d r" style="left:727px;top:540px;width:131px;letter-spacing:0.127px">$ 114 837,08</div>
<div class="c d r" style="left:858px;top:540px;width:131px;letter-spacing:0.169px">$ 0,00</div>
<div class="c d r last" style="left:989px;top:540px;width:116px;letter-spacing:0.127px">$ 114 837,08</div>
<div class="c h" style="left:27px;top:560px;width:101px;letter-spacing:0.271px;padding-left:1px">YCOA/50306000</div>
<div class="c h" style="left:128px;top:560px;width:151px;letter-spacing:0.348px">COGS Setup Time</div>
<div class="c h" style="left:279px;top:560px;width:96px;letter-spacing:0.216px">G/L accounts</div>
<div class="c h" style="left:375px;top:560px;width:93px;letter-spacing:0.106px">Not assigned</div>
<div class="c d r" style="left:468px;top:560px;width:134px;letter-spacing:0.127px">$ 366 055,26</div>
<div class="c d r" style="left:602px;top:560px;width:125px;letter-spacing:0.127px">0,00</div>
<div class="c d r" style="left:727px;top:560px;width:131px;letter-spacing:0.127px">$ 366 055,26</div>
<div class="c d r" style="left:858px;top:560px;width:131px;letter-spacing:0.169px">$ 0,00</div>
<div class="c d r last" style="left:989px;top:560px;width:116px;letter-spacing:0.127px">$ 366 055,26</div>
<div class="c h" style="left:27px;top:580px;width:101px;letter-spacing:0.271px;padding-left:1px">YCOA/16007000</div>
<div class="c h" style="left:128px;top:580px;width:151px;letter-spacing:0.058px">Computer HW&amp;Equipmnt</div>
<div class="c h" style="left:279px;top:580px;width:96px;letter-spacing:0.2px">Assets</div>
<div class="c h" style="left:375px;top:580px;width:93px;letter-spacing:0.106px">Not assigned</div>
<div class="c d r" style="left:468px;top:580px;width:134px;letter-spacing:0.138px">$ 37 400,00</div>
<div class="c d r" style="left:602px;top:580px;width:125px;letter-spacing:0.205px">-12 000,00</div>
<div class="c d r" style="left:727px;top:580px;width:131px;letter-spacing:0.138px">$ 37 400,00</div>
<div class="c d r" style="left:858px;top:580px;width:131px;letter-spacing:0.213px">$ -21 000,00</div>
<div class="c d r last" style="left:989px;top:580px;width:116px;letter-spacing:0.138px">$ 58 400,00</div>
<div class="c h" style="left:27px;top:600px;width:101px"></div>
<div class="c h" style="left:128px;top:600px;width:151px"></div>
<div class="c h" style="left:279px;top:600px;width:96px;letter-spacing:0.106px">Not assigned</div>
<div class="c h" style="left:375px;top:600px;width:93px;letter-spacing:0.106px">Not assigned</div>
<div class="c d r pre" style="left:468px;top:600px;width:134px;letter-spacing:0.138px">$ 10 800,00</div>
<div class="c d r pre" style="left:602px;top:600px;width:125px;letter-spacing:0.227px">-3 600,00</div>
<div class="c d r pre" style="left:727px;top:600px;width:131px;letter-spacing:0.138px">$ 10 800,00</div>
<div class="c d r pre" style="left:858px;top:600px;width:131px;letter-spacing:0.213px">$ -12 600,00</div>
<div class="c d r pre last" style="left:989px;top:600px;width:116px;letter-spacing:0.138px">$ 23 400,00</div>
<div class="c h b" style="left:27px;top:620px;width:101px"></div>
<div class="c h b" style="left:128px;top:620px;width:151px"></div>
<div class="c h b" style="left:279px;top:620px;width:96px;letter-spacing:0.11px">Result</div>
<div class="c h b" style="left:375px;top:620px;width:93px"></div>
<div class="c d r b res" style="left:468px;top:620px;width:134px;letter-spacing:0.267px">$ 48 200,00</div>
<div class="c d r b res" style="left:602px;top:620px;width:125px;letter-spacing:0.285px">-15 600,00</div>
<div class="c d r b res" style="left:727px;top:620px;width:131px;letter-spacing:0.267px">$ 48 200,00</div>
<div class="c d r b res" style="left:858px;top:620px;width:131px;letter-spacing:0.281px">$ -33 600,00</div>
<div class="c d r b res last" style="left:989px;top:620px;width:116px;letter-spacing:0.267px">$ 81 800,00</div>
<div class="c h" style="left:27px;top:640px;width:101px;letter-spacing:0.271px;padding-left:1px">YCOA/16008000</div>
<div class="c h" style="left:128px;top:640px;width:151px;letter-spacing:0.255px">Computer Software</div>
<div class="c h" style="left:279px;top:640px;width:96px;letter-spacing:0.2px">Assets</div>
<div class="c h" style="left:375px;top:640px;width:93px;letter-spacing:0.106px">Not assigned</div>
<div class="c d r" style="left:468px;top:640px;width:134px;letter-spacing:0.169px">$ 0,00</div>
<div class="c d r" style="left:602px;top:640px;width:125px;letter-spacing:0.227px">-6 000,00</div>
<div class="c d r" style="left:727px;top:640px;width:131px;letter-spacing:0.169px">$ 0,00</div>
<div class="c d r" style="left:858px;top:640px;width:131px;letter-spacing:0.232px">$ -6 000,00</div>
<div class="c d r last" style="left:989px;top:640px;width:116px;letter-spacing:0.152px">$ 6 000,00</div>
<div class="c h" style="left:27px;top:660px;width:101px;letter-spacing:0.271px;padding-left:1px">YCOA/51100000</div>
<div class="c h" style="left:128px;top:660px;width:151px;letter-spacing:0.13px">Consptn Raw Mat</div>
<div class="c h" style="left:279px;top:660px;width:96px;letter-spacing:0.216px">G/L accounts</div>
<div class="c h" style="left:375px;top:660px;width:93px;letter-spacing:0.106px">Not assigned</div>
<div class="c d r" style="left:468px;top:660px;width:134px;letter-spacing:0.145px">$ 3 110 971,48</div>
<div class="c d r" style="left:602px;top:660px;width:125px;letter-spacing:0.227px">-2 624,60</div>
<div class="c d r" style="left:727px;top:660px;width:131px;letter-spacing:0.145px">$ 3 110 971,48</div>
<div class="c d r" style="left:858px;top:660px;width:131px;letter-spacing:0.232px">$ -2 624,60</div>
<div class="c d r last" style="left:989px;top:660px;width:116px;letter-spacing:0.145px">$ 3 113 596,08</div>
<div class="c h" style="left:27px;top:680px;width:101px;letter-spacing:0.271px;padding-left:1px">YCOA/51700000</div>
<div class="c h" style="left:128px;top:680px;width:151px;letter-spacing:0.159px">Consptn Repair Mat</div>
<div class="c h" style="left:279px;top:680px;width:96px;letter-spacing:0.216px">G/L accounts</div>
<div class="c h" style="left:375px;top:680px;width:93px;letter-spacing:0.106px">Not assigned</div>
<div class="c d r" style="left:468px;top:680px;width:134px;letter-spacing:0.152px">$ 1 043,00</div>
<div class="c d r" style="left:602px;top:680px;width:125px;letter-spacing:0.127px">0,00</div>
<div class="c d r" style="left:727px;top:680px;width:131px;letter-spacing:0.152px">$ 1 043,00</div>
<div class="c d r" style="left:858px;top:680px;width:131px;letter-spacing:0.169px">$ 0,00</div>
<div class="c d r last" style="left:989px;top:680px;width:116px;letter-spacing:0.152px">$ 1 043,00</div>
<div class="c h" style="left:27px;top:700px;width:101px;letter-spacing:0.271px;padding-left:1px">YCOA/51600000</div>
<div class="c h" style="left:128px;top:700px;width:151px;letter-spacing:0.325px">Consptn Trde Gds</div>
<div class="c h" style="left:279px;top:700px;width:96px;letter-spacing:0.216px">G/L accounts</div>
<div class="c h" style="left:375px;top:700px;width:93px;letter-spacing:0.106px">Not assigned</div>
<div class="c d r" style="left:468px;top:700px;width:134px;letter-spacing:0.127px">$ 376 491,52</div>
<div class="c d r" style="left:602px;top:700px;width:125px;letter-spacing:0.22px">-157,26</div>
<div class="c d r" style="left:727px;top:700px;width:131px;letter-spacing:0.127px">$ 376 491,52</div>
<div class="c d r" style="left:858px;top:700px;width:131px;letter-spacing:0.227px">$ -157,26</div>
<div class="c d r last" style="left:989px;top:700px;width:116px;letter-spacing:0.127px">$ 376 648,78</div>
<div class="c h" style="left:27px;top:720px;width:101px;letter-spacing:0.271px;padding-left:1px">YCOA/94224000</div>
<div class="c h" style="left:128px;top:720px;width:151px;letter-spacing:0.351px">COPA assessments-Adm</div>
<div class="c h" style="left:279px;top:720px;width:96px;letter-spacing:0.216px">G/L accounts</div>
<div class="c h" style="left:375px;top:720px;width:93px;letter-spacing:0.106px">Not assigned</div>
<div class="c d r" style="left:468px;top:720px;width:134px;letter-spacing:0.169px">$ 0,00</div>
<div class="c d r" style="left:602px;top:720px;width:125px;letter-spacing:0.205px">-49 733,64</div>
<div class="c d r" style="left:727px;top:720px;width:131px;letter-spacing:0.169px">$ 0,00</div>
<div class="c d r" style="left:858px;top:720px;width:131px;letter-spacing:0.213px">$ -49 733,64</div>
<div class="c d r last" style="left:989px;top:720px;width:116px;letter-spacing:0.138px">$ 49 753,64</div>
<div class="c h" style="left:27px;top:740px;width:101px;letter-spacing:0.271px;padding-left:1px">YCOA/94221000</div>
<div class="c h" style="left:128px;top:740px;width:151px;letter-spacing:0.33px">COPA assessments-ove</div>
<div class="c h" style="left:279px;top:740px;width:96px;letter-spacing:0.216px">G/L accounts</div>
<div class="c h" style="left:375px;top:740px;width:93px;letter-spacing:0.106px">Not assigned</div>
<div class="c d r" style="left:468px;top:740px;width:134px;letter-spacing:0.169px">$ 0,00</div>
<div class="c d r" style="left:602px;top:740px;width:125px;letter-spacing:0.227px">-4 335,48</div>
<div class="c d r" style="left:727px;top:740px;width:131px;letter-spacing:0.169px">$ 0,00</div>
<div class="c d r" style="left:858px;top:740px;width:131px;letter-spacing:0.232px">$ -4 335,48</div>
<div class="c d r last" style="left:989px;top:740px;width:116px;letter-spacing:0.152px">$ 4 335,48</div>
<div class="c h" style="left:27px;top:760px;width:101px;letter-spacing:0.271px;padding-left:1px">YCOA/44003000</div>
<div class="c h" style="left:128px;top:760px;width:151px;letter-spacing:0.154px">Cust SalesDed Domest</div>
<div class="c h" style="left:279px;top:760px;width:96px;letter-spacing:0.216px">G/L accounts</div>
<div class="c h" style="left:375px;top:760px;width:93px;letter-spacing:0.106px">Not assigned</div>
<div class="c d r" style="left:468px;top:760px;width:134px;letter-spacing:0.145px">$ 28,28</div>
<div class="c d r" style="left:602px;top:760px;width:125px;letter-spacing:0.127px">0,00</div>
<div class="c d r" style="left:727px;top:760px;width:131px;letter-spacing:0.145px">$ 28,28</div>
<div class="c d r" style="left:858px;top:760px;width:131px;letter-spacing:0.169px">$ 0,00</div>
<div class="c d r last" style="left:989px;top:760px;width:116px;letter-spacing:0.145px">$ 28,28</div>
<div class="c h" style="left:27px;top:780px;width:101px;letter-spacing:0.271px;padding-left:1px">YCOA/44001000</div>
<div class="c h" style="left:128px;top:780px;width:151px;letter-spacing:0.195px">Cust SalesDed Foreign</div>
<div class="c h" style="left:279px;top:780px;width:96px;letter-spacing:0.216px">G/L accounts</div>
<div class="c h" style="left:375px;top:780px;width:93px;letter-spacing:0.106px">Not assigned</div>
<div class="c d r" style="left:468px;top:780px;width:134px;letter-spacing:0.169px">$ 0,00</div>
<div class="c d r" style="left:602px;top:780px;width:125px;letter-spacing:0.257px">-84,00</div>
<div class="c d r" style="left:727px;top:780px;width:131px;letter-spacing:0.169px">$ 0,00</div>
<div class="c d r" style="left:858px;top:780px;width:131px;letter-spacing:0.256px">$ -84,00</div>
<div class="c d r last" style="left:989px;top:780px;width:116px;letter-spacing:0.145px">$ 84,00</div>
<div id="selbox" style="left:987px;top:618px;width:119px;height:23px"></div>
<div id="selhandle" style="left:1101px;top:636px"></div>
</div>
<div id="panel">
<div id="pwhite"></div>
<div id="ptitle">Analysis</div>
<svg style="position:absolute;left:510px;top:21px" width="9" height="5" viewBox="0 0 9 5"><path d="M0 0h9L4.500 5z" fill="#555"/></svg>
<svg style="position:absolute;left:551px;top:18px" width="10" height="10" viewBox="0 0 10 10"><path d="M1 1l8 8M9 1l-8 8" stroke="#444" stroke-width="1.500"/></svg>
<div id="find"><span>Find</span></div>
<svg style="position:absolute;left:547px;top:46px" width="17" height="17" viewBox="0 0 17 17"><circle cx="10.500" cy="6" r="4.700" fill="#e8f2fb" stroke="#5f9ad4" stroke-width="1.300"/><path d="M7 9.500L1 15.500" stroke="#d9a441" stroke-width="2.200" stroke-linecap="round"/></svg>
<svg style="position:absolute;left:14px;top:74px" width="15" height="16" viewBox="0 0 15 16"><path d="M7.500 1l6.500 3v8l-6.500 3L1 12V4z" fill="#8a8a8a"/><path d="M7.500 7v8M7.500 7L1 4M7.500 7L14 4" stroke="#fff" stroke-width=".9" fill="none"/></svg>
<div class="pt " style="left:37.7px;top:74px;letter-spacing:-0.486px;">Data Source</div>
<svg style="position:absolute;left:201px;top:76px" width="13" height="12" viewBox="0 0 13 12"><g fill="#fff" stroke="#8a8a8a"><rect x=".5" y=".5" width="2.500" height="11"/><rect x="4.500" y=".5" width="2.500" height="11"/><rect x="8.500" y=".5" width="2.500" height="11"/></g></svg>
<div class="pt " style="left:222.5px;top:74px;letter-spacing:-0.438px;">Columns</div>
<svg style="position:absolute;left:384px;top:74px" width="18" height="16" viewBox="0 0 18 16"><rect x=".5" y="4.500" width="11" height="11" fill="#f6f6f6" stroke="#8a8a8a"/><path d="M2.500 8h7M2.500 10.500h7M2.500 13h4" stroke="#aaa" stroke-width=".9"/><path d="M8 4.500L12 1l3 .5.5 2.500L12 7.500z" fill="#e9d9a8" stroke="#8a8a8a" stroke-width=".8"/><rect x="14" y="2" width="3" height="3" fill="#b58b3a"/></svg>
<div class="pt " style="left:408.7px;top:74px;letter-spacing:-0.273px;">Properties</div>
<div class="box" id="dsbox"><div id="dstrack"></div><div id="dsthumb"></div>
<svg style="position:absolute;left:167px;top:6px" width="9" height="6" viewBox="0 0 9 6"><path d="M.8 5l3.700-3.700L8.200 5" fill="none" stroke="#505050" stroke-width="1.800"/></svg>
<svg style="position:absolute;left:167px;top:669px" width="9" height="6" viewBox="0 0 9 6"><path d="M.8 1l3.700 3.700L8.200 1" fill="none" stroke="#505050" stroke-width="1.800"/></svg>
<div id="dshl"></div>
</div>
<svg style="position:absolute;left:18px;top:103px" width="12" height="12" viewBox="0 0 12 12"><path d="M6 .5l5.500 2.500v6L6 11.500.5 9V3z" fill="#f08a3c"/><path d="M6 5.500l5.500-2.500v6L6 11.500z" fill="#d96f20"/><path d="M6 .5l5.500 2.500L6 5.500.5 3z" fill="#f9b77d"/></svg>
<div class="pt " style="left:37.0px;top:101px;letter-spacing:-0.465px;">G/L Line Items Cube</div>
<svg class="pm" style="left:20px;top:125px" width="9" height="9" viewBox="0 0 9 9"><rect x=".5" y=".5" width="8" height="8" fill="#fff" stroke="#777"/><g stroke="#111" stroke-width="1.250"><path d="M2.500 4.500h4"/><path d="M4.500 2.500v4"/></g></svg>
<div class="pt " style="left:35.8px;top:121px;letter-spacing:-0.491px;clip-path:inset(0 0 0px 0)">Measures</div>
<svg class="pm" style="left:20px;top:143px" width="9" height="9" viewBox="0 0 9 9"><rect x=".5" y=".5" width="8" height="8" fill="#fff" stroke="#777"/><g stroke="#111" stroke-width="1.250"><path d="M2.500 4.500h4"/><path d="M4.500 2.500v4"/></g></svg>
<div class="pt " style="left:35.8px;top:139px;letter-spacing:-0.262px;clip-path:inset(0 0 0px 0)">Account Assgmt No.</div>
<svg class="pm" style="left:20px;top:161px" width="9" height="9" viewBox="0 0 9 9"><rect x=".5" y=".5" width="8" height="8" fill="#fff" stroke="#777"/><g stroke="#111" stroke-width="1.250"><path d="M2.500 4.500h4"/><path d="M4.500 2.500v4"/></g></svg>
<div class="pt " style="left:35.8px;top:157px;letter-spacing:-0.195px;clip-path:inset(0 0 0px 0)">Account Assignment</div>
<svg class="pm" style="left:20px;top:179px" width="9" height="9" viewBox="0 0 9 9"><rect x=".5" y=".5" width="8" height="8" fill="#fff" stroke="#777"/><g stroke="#111" stroke-width="1.250"><path d="M2.500 4.500h4"/><path d="M4.500 2.500v4"/></g></svg>
<div class="pt " style="left:35.8px;top:175px;letter-spacing:-0.464px;clip-path:inset(0 0 0px 0)">Account Type</div>
<svg class="pm" style="left:20px;top:197px" width="9" height="9" viewBox="0 0 9 9"><rect x=".5" y=".5" width="8" height="8" fill="#fff" stroke="#777"/><g stroke="#111" stroke-width="1.250"><path d="M2.500 4.500h4"/><path d="M4.500 2.500v4"/></g></svg>
<div class="pt " style="left:35.8px;top:193px;letter-spacing:-0.215px;clip-path:inset(0 0 0px 0)">Activity</div>
<svg class="pm" style="left:20px;top:215px" width="9" height="9" viewBox="0 0 9 9"><rect x=".5" y=".5" width="8" height="8" fill="#fff" stroke="#777"/><g stroke="#111" stroke-width="1.250"><path d="M2.500 4.500h4"/><path d="M4.500 2.500v4"/></g></svg>
<div class="pt " style="left:35.8px;top:211px;letter-spacing:-0.466px;clip-path:inset(0 0 0px 0)">Activity Type</div>
<svg class="pm" style="left:20px;top:233px" width="9" height="9" viewBox="0 0 9 9"><rect x=".5" y=".5" width="8" height="8" fill="#fff" stroke="#777"/><g stroke="#111" stroke-width="1.250"><path d="M2.500 4.500h4"/><path d="M4.500 2.500v4"/></g></svg>
<div class="pt " style="left:35.8px;top:229px;letter-spacing:-0.157px;clip-path:inset(0 0 0px 0)">Add Unit of Measure1</div>
<svg class="pm" style="left:20px;top:251px" width="9" height="9" viewBox="0 0 9 9"><rect x=".5" y=".5" width="8" height="8" fill="#fff" stroke="#777"/><g stroke="#111" stroke-width="1.250"><path d="M2.500 4.500h4"/><path d="M4.500 2.500v4"/></g></svg>
<div class="pt " style="left:35.8px;top:247px;letter-spacing:-0.125px;clip-path:inset(0 0 0px 0)">Add Unit of Measure2</div>
<svg class="pm" style="left:20px;top:269px" width="9" height="9" viewBox="0 0 9 9"><rect x=".5" y=".5" width="8" height="8" fill="#fff" stroke="#777"/><g stroke="#111" stroke-width="1.250"><path d="M2.500 4.500h4"/><path d="M4.500 2.500v4"/></g></svg>
<div class="pt " style="left:35.8px;top:265px;letter-spacing:-0.125px;clip-path:inset(0 0 0px 0)">Add Unit of Measure3</div>
<svg class="pm" style="left:20px;top:287px" width="9" height="9" viewBox="0 0 9 9"><rect x=".5" y=".5" width="8" height="8" fill="#fff" stroke="#777"/><g stroke="#111" stroke-width="1.250"><path d="M2.500 4.500h4"/><path d="M4.500 2.500v4"/></g></svg>
<div class="pt " style="left:35.8px;top:283px;letter-spacing:-0.188px;clip-path:inset(0 0 0px 0)">Altern. G/L Account</div>
<svg class="pm" style="left:20px;top:305px" width="9" height="9" viewBox="0 0 9 9"><rect x=".5" y=".5" width="8" height="8" fill="#fff" stroke="#777"/><g stroke="#111" stroke-width="1.250"><path d="M2.500 4.500h4"/><path d="M4.500 2.500v4"/></g></svg>
<div class="pt " style="left:35.8px;top:301px;letter-spacing:-0.692px;clip-path:inset(0 0 0px 0)">Asset Class</div>
<svg class="pm" style="left:20px;top:323px" width="9" height="9" viewBox="0 0 9 9"><rect x=".5" y=".5" width="8" height="8" fill="#fff" stroke="#777"/><g stroke="#111" stroke-width="1.250"><path d="M2.500 4.500h4"/><path d="M4.500 2.500v4"/></g></svg>
<div class="pt " style="left:35.8px;top:319px;letter-spacing:-0.334px;clip-path:inset(0 0 0px 0)">Asset Subnumber</div>
<svg class="pm" style="left:20px;top:341px" width="9" height="9" viewBox="0 0 9 9"><rect x=".5" y=".5" width="8" height="8" fill="#fff" stroke="#777"/><g stroke="#111" stroke-width="1.250"><path d="M2.500 4.500h4"/><path d="M4.500 2.500v4"/></g></svg>
<div class="pt " style="left:35.8px;top:337px;letter-spacing:-0.42px;clip-path:inset(0 0 0px 0)">Asset Value Date</div>
<svg class="pm" style="left:20px;top:359px" width="9" height="9" viewBox="0 0 9 9"><rect x=".5" y=".5" width="8" height="8" fill="#fff" stroke="#777"/><g stroke="#111" stroke-width="1.250"><path d="M2.500 4.500h4"/><path d="M4.500 2.500v4"/></g></svg>
<div class="pt " style="left:35.8px;top:355px;letter-spacing:-0.367px;clip-path:inset(0 0 0px 0)">Assignment Reference</div>
<svg class="pm" style="left:20px;top:377px" width="9" height="9" viewBox="0 0 9 9"><rect x=".5" y=".5" width="8" height="8" fill="#fff" stroke="#777"/><g stroke="#111" stroke-width="1.250"><path d="M2.500 4.500h4"/><path d="M4.500 2.500v4"/></g></svg>
<div class="pt " style="left:35.8px;top:373px;letter-spacing:-0.492px;clip-path:inset(0 0 0px 0)">Ast Transaction Type</div>
<svg class="pm" style="left:20px;top:395px" width="9" height="9" viewBox="0 0 9 9"><rect x=".5" y=".5" width="8" height="8" fill="#fff" stroke="#777"/><g stroke="#111" stroke-width="1.250"><path d="M2.500 4.500h4"/><path d="M4.500 2.500v4"/></g></svg>
<div class="pt " style="left:35.8px;top:391px;letter-spacing:0.023px;clip-path:inset(0 0 0px 0)">Authorization Group</div>
<svg class="pm" style="left:20px;top:413px" width="9" height="9" viewBox="0 0 9 9"><rect x=".5" y=".5" width="8" height="8" fill="#fff" stroke="#777"/><g stroke="#111" stroke-width="1.250"><path d="M2.500 4.500h4"/><path d="M4.500 2.500v4"/></g></svg>
<div class="pt " style="left:35.8px;top:409px;letter-spacing:0.023px;clip-path:inset(0 0 0px 0)">Authorization Group</div>
<svg class="pm" style="left:20px;top:431px" width="9" height="9" viewBox="0 0 9 9"><rect x=".5" y=".5" width="8" height="8" fill="#fff" stroke="#777"/><g stroke="#111" stroke-width="1.250"><path d="M2.500 4.500h4"/><path d="M4.500 2.500v4"/></g></svg>
<div class="pt " style="left:35.8px;top:427px;letter-spacing:0.023px;clip-path:inset(0 0 0px 0)">Authorization Group</div>
<svg class="pm" style="left:20px;top:449px" width="9" height="9" viewBox="0 0 9 9"><rect x=".5" y=".5" width="8" height="8" fill="#fff" stroke="#777"/><g stroke="#111" stroke-width="1.250"><path d="M2.500 4.500h4"/><path d="M4.500 2.500v4"/></g></svg>
<div class="pt " style="left:35.8px;top:445px;letter-spacing:0.023px;clip-path:inset(0 0 0px 0)">Authorization Group</div>
<svg class="pm" style="left:20px;top:467px" width="9" height="9" viewBox="0 0 9 9"><rect x=".5" y=".5" width="8" height="8" fill="#fff" stroke="#777"/><g stroke="#111" stroke-width="1.250"><path d="M2.500 4.500h4"/><path d="M4.500 2.500v4"/></g></svg>
<div class="pt " style="left:35.8px;top:463px;letter-spacing:-0.633px;clip-path:inset(0 0 0px 0)">Balance Trans Crcy</div>
<svg class="pm" style="left:20px;top:485px" width="9" height="9" viewBox="0 0 9 9"><rect x=".5" y=".5" width="8" height="8" fill="#fff" stroke="#777"/><g stroke="#111" stroke-width="1.250"><path d="M2.500 4.500h4"/><path d="M4.500 2.500v4"/></g></svg>
<div class="pt " style="left:35.8px;top:481px;letter-spacing:-0.264px;clip-path:inset(0 0 0px 0)">Base Unit of Measure</div>
<svg class="pm" style="left:20px;top:503px" width="9" height="9" viewBox="0 0 9 9"><rect x=".5" y=".5" width="8" height="8" fill="#fff" stroke="#777"/><g stroke="#111" stroke-width="1.250"><path d="M2.500 4.500h4"/><path d="M4.500 2.500v4"/></g></svg>
<div class="pt " style="left:35.8px;top:499px;letter-spacing:-0.253px;clip-path:inset(0 0 0px 0)">Billing Type</div>
<svg class="pm" style="left:20px;top:521px" width="9" height="9" viewBox="0 0 9 9"><rect x=".5" y=".5" width="8" height="8" fill="#fff" stroke="#777"/><g stroke="#111" stroke-width="1.250"><path d="M2.500 4.500h4"/><path d="M4.500 2.500v4"/></g></svg>
<div class="pt " style="left:35.8px;top:517px;letter-spacing:0.055px;clip-path:inset(0 0 0px 0)">Bill-to party</div>
<svg class="pm" style="left:20px;top:539px" width="9" height="9" viewBox="0 0 9 9"><rect x=".5" y=".5" width="8" height="8" fill="#fff" stroke="#777"/><g stroke="#111" stroke-width="1.250"><path d="M2.500 4.500h4"/><path d="M4.500 2.500v4"/></g></svg>
<div class="pt " style="left:35.8px;top:535px;letter-spacing:-0.145px;clip-path:inset(0 0 0px 0)">Budget Period</div>
<svg class="pm" style="left:20px;top:557px" width="9" height="9" viewBox="0 0 9 9"><rect x=".5" y=".5" width="8" height="8" fill="#fff" stroke="#777"/><g stroke="#111" stroke-width="1.250"><path d="M2.500 4.500h4"/><path d="M4.500 2.500v4"/></g></svg>
<div class="pt " style="left:35.8px;top:553px;letter-spacing:-0.701px;clip-path:inset(0 0 0px 0)">Bus. Transac. Type</div>
<svg class="pm" style="left:20px;top:575px" width="9" height="9" viewBox="0 0 9 9"><rect x=".5" y=".5" width="8" height="8" fill="#fff" stroke="#777"/><g stroke="#111" stroke-width="1.250"><path d="M2.500 4.500h4"/><path d="M4.500 2.500v4"/></g></svg>
<div class="pt " style="left:35.8px;top:571px;letter-spacing:-0.444px;clip-path:inset(0 0 0px 0)">Business Area</div>
<svg class="pm" style="left:20px;top:593px" width="9" height="9" viewBox="0 0 9 9"><rect x=".5" y=".5" width="8" height="8" fill="#fff" stroke="#777"/><g stroke="#111" stroke-width="1.250"><path d="M2.500 4.500h4"/><path d="M4.500 2.500v4"/></g></svg>
<div class="pt " style="left:35.8px;top:589px;letter-spacing:-0.595px;clip-path:inset(0 0 0px 0)">Business Process</div>
<svg class="pm" style="left:20px;top:611px" width="9" height="9" viewBox="0 0 9 9"><rect x=".5" y=".5" width="8" height="8" fill="#fff" stroke="#777"/><g stroke="#111" stroke-width="1.250"><path d="M2.500 4.500h4"/><path d="M4.500 2.500v4"/></g></svg>
<div class="pt " style="left:35.8px;top:607px;letter-spacing:-0.077px;clip-path:inset(0 0 0px 0)">Calendar Month</div>
<svg class="pm" style="left:20px;top:629px" width="9" height="9" viewBox="0 0 9 9"><rect x=".5" y=".5" width="8" height="8" fill="#fff" stroke="#777"/><g stroke="#111" stroke-width="1.250"><path d="M2.500 4.500h4"/><path d="M4.500 2.500v4"/></g></svg>
<div class="pt " style="left:35.8px;top:625px;letter-spacing:-0.268px;clip-path:inset(0 0 0px 0)">Calendar Quarter</div>
<svg class="pm" style="left:20px;top:647px" width="9" height="9" viewBox="0 0 9 9"><rect x=".5" y=".5" width="8" height="8" fill="#fff" stroke="#777"/><g stroke="#111" stroke-width="1.250"><path d="M2.500 4.500h4"/><path d="M4.500 2.500v4"/></g></svg>
<div class="pt " style="left:35.8px;top:643px;letter-spacing:-0.311px;clip-path:inset(0 0 0px 0)">Calendar Week</div>
<svg class="pm" style="left:20px;top:665px" width="9" height="9" viewBox="0 0 9 9"><rect x=".5" y=".5" width="8" height="8" fill="#fff" stroke="#777"/><g stroke="#111" stroke-width="1.250"><path d="M2.500 4.500h4"/><path d="M4.500 2.500v4"/></g></svg>
<div class="pt " style="left:35.8px;top:661px;letter-spacing:-0.498px;clip-path:inset(0 0 0px 0)">Calendar Year</div>
<svg class="pm" style="left:20px;top:683px" width="9" height="9" viewBox="0 0 9 9"><rect x=".5" y=".5" width="8" height="8" fill="#fff" stroke="#777"/><g stroke="#111" stroke-width="1.250"><path d="M2.500 4.500h4"/><path d="M4.500 2.500v4"/></g></svg>
<div class="pt " style="left:35.8px;top:679px;letter-spacing:-0.153px;clip-path:inset(0 0 0px 0)">Chart of Accounts</div>
<svg class="pm" style="left:20px;top:701px" width="9" height="9" viewBox="0 0 9 9"><rect x=".5" y=".5" width="8" height="8" fill="#fff" stroke="#777"/><g stroke="#111" stroke-width="1.250"><path d="M2.500 4.500h4"/><path d="M4.500 2.500v4"/></g></svg>
<div class="pt " style="left:35.8px;top:697px;letter-spacing:-0.235px;clip-path:inset(0 0 0px 0)">Clearing Date</div>
<svg class="pm" style="left:20px;top:719px" width="9" height="9" viewBox="0 0 9 9"><rect x=".5" y=".5" width="8" height="8" fill="#fff" stroke="#777"/><g stroke="#111" stroke-width="1.250"><path d="M2.500 4.500h4"/><path d="M4.500 2.500v4"/></g></svg>
<div class="pt " style="left:35.8px;top:715px;letter-spacing:-0.258px;clip-path:inset(0 0 0px 0)">Clearing Entry</div>
<svg class="pm" style="left:20px;top:737px" width="9" height="9" viewBox="0 0 9 9"><rect x=".5" y=".5" width="8" height="8" fill="#fff" stroke="#777"/><g stroke="#111" stroke-width="1.250"><path d="M2.500 4.500h4"/><path d="M4.500 2.500v4"/></g></svg>
<div class="pt " style="left:35.8px;top:733px;letter-spacing:-0.493px;clip-path:inset(0 0 0px 0)">Clearing Fisc. Year</div>
<svg class="pm" style="left:20px;top:755px" width="9" height="9" viewBox="0 0 9 9"><rect x=".5" y=".5" width="8" height="8" fill="#fff" stroke="#777"/><g stroke="#111" stroke-width="1.250"><path d="M2.500 4.500h4"/><path d="M4.500 2.500v4"/></g></svg>
<div class="pt " style="left:35.8px;top:751px;letter-spacing:-0.26px;clip-path:inset(0 0 0px 0)">Cntry Chrt of Accts</div>
<div class="pt " style="left:35.8px;top:769px;letter-spacing:-0.37px;clip-path:inset(0 0 7px 0)">CO Object Currency</div>
<svg class="pm" style="left:20px;top:772px" width="9" height="5" viewBox="0 0 9 5"><path d="M.5 5V.5h8V5" fill="#fff" stroke="#8a8a8a"/><path d="M4.500 2.500V5" stroke="#222"/></svg>
<div class="box" id="colbox"></div>
<svg class="pm" style="left:201px;top:103px" width="9" height="9" viewBox="0 0 9 9"><rect x=".5" y=".5" width="8" height="8" fill="#fff" stroke="#777"/><g stroke="#111" stroke-width="1.250"><path d="M2.500 4.500h4"/></g></svg>
<div class="dots h" style="left:212px;top:107px;width:4px"></div>
<div class="pt " style="left:216.7px;top:99px;letter-spacing:-0.492px;">Measures</div>
<svg style="position:absolute;left:274px;top:102px" width="15" height="12" viewBox="0 0 15 12"><path d="M.8 .8h13.400L9 6.500v4.700H6V6.500z" fill="#f7d21e" stroke="#8a7a1a" stroke-width="1"/></svg>
<div class="dots v" style="left:224px;top:116px;height:82px"></div>
<div class="dots h" style="left:225px;top:125px;width:8px"></div>
<div class="pt " style="left:235.8px;top:117px;letter-spacing:-0.404px;">Amount in Trans Crcy</div>
<div class="dots h" style="left:225px;top:143px;width:8px"></div>
<div class="pt " style="left:235.8px;top:135px;letter-spacing:-0.352px;">Cr Amt in Glob Crcy</div>
<div class="dots h" style="left:225px;top:161px;width:8px"></div>
<div class="pt " style="left:235.8px;top:153px;letter-spacing:-0.534px;">Amt in BalTrans Crcy</div>
<div class="dots h" style="left:225px;top:179px;width:8px"></div>
<div class="pt " style="left:235.8px;top:171px;letter-spacing:-0.527px;">Cr Amt in Trans Crcy</div>
<div class="dots h" style="left:225px;top:197px;width:8px"></div>
<div class="pt " style="left:235.8px;top:189px;letter-spacing:-0.509px;">Dr Amt in CC Crcy</div>
<svg style="position:absolute;left:200px;top:287px" width="14" height="12" viewBox="0 0 14 12"><g fill="#fff" stroke="#8a8a8a"><rect x=".5" y=".5" width="12" height="2.500"/><rect x=".5" y="4.500" width="12" height="2.500"/><rect x=".5" y="8.500" width="12" height="2.500"/></g></svg>
<div class="pt " style="left:222.5px;top:285px;letter-spacing:-0.716px;">Rows</div>
<svg style="position:absolute;left:364px;top:285px" width="15" height="15" viewBox="0 0 15 15"><rect x="0" y="0" width="15" height="15" fill="#dfe9f5"/><rect x="0" y="0" width="15" height="15" fill="none" stroke="#9ab6d8" stroke-width="1"/><path d="M5 2.500h8" stroke="#e03a2a" stroke-width="1.400"/><path d="M3.500 5v8" stroke="#2a5fa8" stroke-width="1.400"/><path d="M12 5v3.500H7.500M9.500 6.500l-2 2 2 2" fill="none" stroke="#2a5fa8" stroke-width="1.300"/></svg>
<div class="box" id="rowbox"></div>
<div class="dots v" style="left:205px;top:322px;height:32px"></div>
<svg class="pm" style="left:201px;top:314px" width="9" height="9" viewBox="0 0 9 9"><rect x=".5" y=".5" width="8" height="8" fill="#fff" stroke="#777"/><g stroke="#111" stroke-width="1.250"><path d="M2.500 4.500h4"/><path d="M4.500 2.500v4"/></g></svg>
<div class="dots h" style="left:212px;top:318px;width:4px"></div>
<div class="pt " style="left:216.7px;top:310px;letter-spacing:-0.25px;">G/L Account</div>
<svg class="pm" style="left:201px;top:332px" width="9" height="9" viewBox="0 0 9 9"><rect x=".5" y=".5" width="8" height="8" fill="#fff" stroke="#777"/><g stroke="#111" stroke-width="1.250"><path d="M2.500 4.500h4"/><path d="M4.500 2.500v4"/></g></svg>
<div class="dots h" style="left:212px;top:336px;width:4px"></div>
<div class="pt " style="left:216.7px;top:328px;letter-spacing:-0.46px;">Account Type</div>
<svg class="pm" style="left:201px;top:350px" width="9" height="9" viewBox="0 0 9 9"><rect x=".5" y=".5" width="8" height="8" fill="#fff" stroke="#777"/><g stroke="#111" stroke-width="1.250"><path d="M2.500 4.500h4"/><path d="M4.500 2.500v4"/></g></svg>
<div class="dots h" style="left:212px;top:354px;width:4px"></div>
<div class="pt " style="left:216.7px;top:346px;letter-spacing:-0.599px;">WBS Element</div>
<svg style="position:absolute;left:199px;top:514px" width="14" height="12" viewBox="0 0 14 12"><path d="M.8 .8h12.400L8 6.500v4.700H6V6.500z" fill="#fff" stroke="#8a8a8a" stroke-width="1"/></svg>
<div class="pt " style="left:222.5px;top:512px;letter-spacing:-0.318px;">Background Filter</div>
<div class="box" id="bfbox"></div>
<div class="box" id="propbox"></div>
<div class="frame" style="top:106px;height:107px"></div><div class="legend" style="top:99px;width:44.1px;letter-spacing:-0.399px">General</div>
<div class="pt " style="left:394.0px;top:121px;letter-spacing:-0.145px;">Description</div>
<div class="tb" style="top:137px"><span style="letter-spacing:-0.601px">G/L Line Items Cube</span></div>
<div class="pt " style="left:394.0px;top:169px;letter-spacing:-0.487px;">Technical Name</div>
<div class="tb" style="top:185px"><span style="letter-spacing:-0.794px">!!A2CIFIGLLITMCUBE</span></div>
<div class="frame" style="top:226px;height:58px"></div><div class="legend" style="top:218px;width:94.2px;letter-spacing:-0.291px">Zero Suppression</div>
<div class="chk" style="left:392px;top:240px"></div><div class="pt " style="left:408.7px;top:239px;letter-spacing:-0.536px;">Suppress Zeros in Rows</div>
<div class="chk" style="left:392px;top:263px"></div><div class="pt " style="left:408.7px;top:262px;letter-spacing:-0.476px;">Suppress Zeros in Columns</div>
<div class="frame" style="top:297px;height:58px"></div><div class="legend" style="top:289px;width:89.6px;letter-spacing:-0.352px">Compact Display</div>
<div class="chk" style="left:392px;top:311px"></div><div class="pt " style="left:408.7px;top:310px;letter-spacing:-0.383px;">Compact Display in Rows</div>
<div class="chk" style="left:392px;top:334px"></div><div class="pt " style="left:408.7px;top:333px;letter-spacing:-0.343px;">Compact Display in Columns</div>
<div class="frame" style="top:368px;height:58px"></div><div class="legend" style="top:360px;width:33.0px;letter-spacing:-0.427px">Totals</div>
<div class="chk" style="left:392px;top:382px"></div><div class="pt " style="left:408.7px;top:381px;letter-spacing:-0.286px;">Total Rows Above Members</div>
<div class="chk" style="left:392px;top:405px"></div><div class="pt " style="left:408.7px;top:404px;letter-spacing:-0.237px;width:155.5px;overflow:hidden;">Total Columns Left of Members</div>
<div class="frame" style="top:439px;height:132px"></div><div class="legend" style="top:431px;width:83.1px;letter-spacing:-0.365px">General Format</div>
<div class="pt " style="left:394.0px;top:454px;letter-spacing:-0.334px;">Display of Negative Values:</div>
<div class="psel" style="top:471px"><span style="letter-spacing:-0.8px">-X</span><svg width="9" height="6" viewBox="0 0 9 6"><path d="M.7 .7L4.500 4.500l3.800-3.800" fill="none" stroke="#444" stroke-width="1.100"/></svg></div>
<div class="pt " style="left:394.0px;top:494px;letter-spacing:-0.432px;">Display Zero as:</div>
<div class="psel" style="top:511px"><span style="letter-spacing:-0.108px">With Currency/Unit</span><svg width="9" height="6" viewBox="0 0 9 6"><path d="M.7 .7L4.500 4.500l3.800-3.800" fill="none" stroke="#444" stroke-width="1.100"/></svg></div>
<div class="pt " style="left:394.0px;top:543px;letter-spacing:-1.016px;">Use</div>
<div id="usebox"></div>
<div id="propclip"></div>
<div id="ptabs"><div id="ptact"><span style="letter-spacing:-0.715px">Analysis</span></div>
<div class="ptab" style="left:65.5px;letter-spacing:0.169px">Information</div><div class="ptsep" style="left:133px"></div>
<div class="ptab" style="left:141.5px;letter-spacing:-0.13px">Components</div><div class="ptsep" style="left:214px"></div>
<div class="ptab" style="left:221.5px;letter-spacing:-0.31px">Design Rules</div><div class="ptsep" style="left:295px"></div>
</div>
</div>
</body></html>
